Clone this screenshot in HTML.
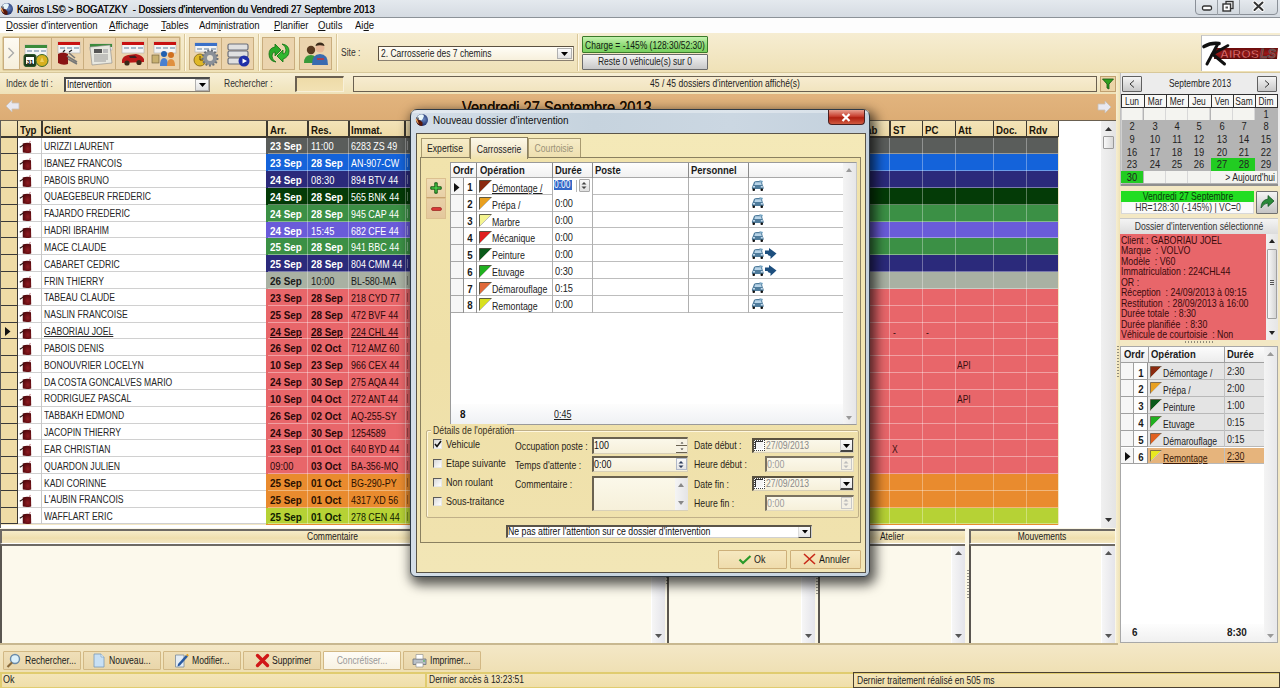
<!DOCTYPE html><html><head><meta charset="utf-8"><title>Kairos LS</title><style>
*{margin:0;padding:0;box-sizing:border-box}
html,body{width:1280px;height:688px;overflow:hidden;background:#f3e7c3;font-family:"Liberation Sans",sans-serif;color:#000}
.t{position:absolute;white-space:nowrap}
.r{position:absolute}
svg{position:absolute;overflow:visible}
</style></head><body>
<div class="r" style="left:0px;top:0px;width:1280px;height:18px;background:linear-gradient(#e4e9ee,#d5dbe2);border-bottom:1px solid #8c9298"></div>
<svg style="left:-0.5px;top:2px" width="14" height="14" viewBox="0 0 14 14"><defs><radialGradient id="g1b" cx=".65" cy=".45" r=".6"><stop offset="0" stop-color="#6a88c0"/><stop offset="1" stop-color="#0e1e5a"/></radialGradient></defs><circle cx="7" cy="7" r="6" fill="url(#g1b)"/><path d="M1.6 5 Q3 1.2 7 1.2 Q8.5 1.4 9 3 Q8 6 6.5 7.5 Q4 7 1.6 5Z" fill="#e8f6fa"/><path d="M1.2 8 Q1.5 6 3 6.5 Q6 7.5 7.5 9.5 Q8 12 6.5 13 Q2.5 12.5 1.2 8Z" fill="#5a1808"/><path d="M0.6 6.5 Q1 5 2 5.5 Q2.5 8 4 11 Q1.5 10 0.6 6.5Z" fill="#f0a860"/><path d="M1.5 4.8 L4 5.3" stroke="#333" stroke-width=".9"/></svg>
<div class="t" style="left:17px;top:0.5px;height:16px;line-height:16px;font-size:11.5px;color:#141414;transform:scaleX(0.83);transform-origin:0 50%;text-shadow:0 0 .3px #000">Kairos LS© &gt; BOGATZKY &nbsp;- Dossiers d'intervention du Vendredi 27 Septembre 2013</div>
<div class="r" style="left:1195px;top:-2px;width:83px;height:17px;border:1px solid #8a9098;border-radius:0 0 4px 4px;background:linear-gradient(#e6eaef,#d2d8de)"></div>
<div class="r" style="left:1217px;top:0px;width:1px;height:15px;background:#9aa0a6"></div>
<div class="r" style="left:1239px;top:0px;width:1px;height:15px;background:#9aa0a6"></div>
<svg style="left:1200px;top:0px" width="70" height="14" viewBox="0 0 70 14"><rect x="2.5" y="6" width="9" height="4" rx="1.5" fill="#fff" stroke="#333" stroke-width="1.3"/><rect x="26" y="1.5" width="7" height="7" fill="#eee" stroke="#333" stroke-width="1.3"/><rect x="23" y="4" width="7.5" height="7" fill="#fff" stroke="#333" stroke-width="1.4"/><rect x="25.5" y="6.5" width="2.5" height="2" fill="#555"/><path d="M54.5 2.5 L62.5 10 M62.5 2.5 L54.5 10" stroke="#fff" stroke-width="4" stroke-linecap="round"/><path d="M54.5 2.5 L62.5 10 M62.5 2.5 L54.5 10" stroke="#333" stroke-width="2" stroke-linecap="round"/></svg>
<div class="r" style="left:0px;top:18px;width:1280px;height:15px;background:#fdfdfd"></div>
<div class="t" style="left:6px;top:18px;height:15px;line-height:15px;font-size:10.5px;color:#111;transform:scaleX(0.91);transform-origin:0 50%;"><u>D</u>ossier d'intervention</div>
<div class="t" style="left:109px;top:18px;height:15px;line-height:15px;font-size:10.5px;color:#111;transform:scaleX(0.91);transform-origin:0 50%;"><u>A</u>ffichage</div>
<div class="t" style="left:161px;top:18px;height:15px;line-height:15px;font-size:10.5px;color:#111;transform:scaleX(0.91);transform-origin:0 50%;"><u>T</u>ables</div>
<div class="t" style="left:199px;top:18px;height:15px;line-height:15px;font-size:10.5px;color:#111;transform:scaleX(0.91);transform-origin:0 50%;">Adm<u>i</u>nistration</div>
<div class="t" style="left:274px;top:18px;height:15px;line-height:15px;font-size:10.5px;color:#111;transform:scaleX(0.91);transform-origin:0 50%;"><u>P</u>lanifier</div>
<div class="t" style="left:318px;top:18px;height:15px;line-height:15px;font-size:10.5px;color:#111;transform:scaleX(0.91);transform-origin:0 50%;"><u>O</u>utils</div>
<div class="t" style="left:355px;top:18px;height:15px;line-height:15px;font-size:10.5px;color:#111;transform:scaleX(0.91);transform-origin:0 50%;">Ai<u>d</u>e</div>
<div class="r" style="left:0px;top:33px;width:1280px;height:40px;background:linear-gradient(#f6edd2,#efe1b6)"></div>
<div class="r" style="left:0px;top:72px;width:1280px;height:1px;background:#d8c89a"></div>
<div class="r" style="left:2px;top:36px;width:179px;height:35px;border:1px solid #e0cfa0;border-radius:2px"></div>
<div class="r" style="left:3px;top:37px;width:17px;height:33px;background:linear-gradient(#fdfaf2,#f6efdc);border:1px solid #c9ad7e"></div>
<svg style="left:7px;top:47px" width="8" height="12" viewBox="0 0 8 12"><path d="M1.5 1 L6.5 6 L1.5 11" fill="none" stroke="#a8a8a8" stroke-width="1.3"/></svg>
<div class="r" style="left:19px;top:37px;width:33px;height:33px;background:#ebd4ae;border:1px solid #c9ad7e"></div>
<div class="r" style="left:51px;top:37px;width:33px;height:33px;background:#ebd4ae;border:1px solid #c9ad7e"></div>
<div class="r" style="left:83px;top:37px;width:33px;height:33px;background:#ebd4ae;border:1px solid #c9ad7e"></div>
<div class="r" style="left:115px;top:37px;width:33px;height:33px;background:#ebd4ae;border:1px solid #c9ad7e"></div>
<div class="r" style="left:147px;top:37px;width:33px;height:33px;background:#ebd4ae;border:1px solid #c9ad7e"></div>
<div class="r" style="left:184px;top:34px;width:1px;height:37px;background:#d9c79a"></div>
<div class="r" style="left:185px;top:34px;width:1px;height:37px;background:#fff8e4"></div>
<div class="r" style="left:189px;top:37px;width:33px;height:33px;background:#ebd4ae;border:1px solid #c9ad7e"></div>
<div class="r" style="left:221px;top:37px;width:33px;height:33px;background:#ebd4ae;border:1px solid #c9ad7e"></div>
<div class="r" style="left:258px;top:34px;width:1px;height:37px;background:#d9c79a"></div>
<div class="r" style="left:259px;top:34px;width:1px;height:37px;background:#fff8e4"></div>
<div class="r" style="left:262px;top:37px;width:33px;height:33px;background:#ebd4ae;border:1px solid #c9ad7e"></div>
<div class="r" style="left:299px;top:37px;width:33px;height:33px;background:#ebd4ae;border:1px solid #c9ad7e"></div>
<div class="r" style="left:336px;top:34px;width:1px;height:37px;background:#d9c79a"></div>
<div class="r" style="left:337px;top:34px;width:1px;height:37px;background:#fff8e4"></div>
<svg style="left:25px;top:45px" width="22" height="11" viewBox="0 0 22 11"><rect x="0" y="0" width="22" height="11" fill="#f4f4f4" stroke="#b0b0b0" stroke-width=".6"/><rect x="0" y="0" width="22" height="3" fill="#3b8b3b"/><rect x="2" y="5" width="5" height="2" fill="#a8b8c8"/><rect x="9" y="5" width="5" height="2" fill="#a8b8c8"/><rect x="16" y="5" width="5" height="2" fill="#a8b8c8"/></svg>
<svg style="left:23px;top:54px" width="26" height="13" viewBox="0 0 26 13"><rect x="1" y="0.5" width="12" height="12" rx="2" fill="#1e3a1e" stroke="#2a5a2a"/><rect x="3" y="3" width="8" height="7" fill="#fff"/><text x="7" y="9.5" font-size="6" font-weight="bold" text-anchor="middle" font-family="Liberation Sans" fill="#000">31</text><circle cx="19" cy="6.5" r="6" fill="#d8b020" stroke="#3a6a2a" stroke-width="1"/><path d="M19 3 L21 8 L17 8Z" fill="#f0d060"/></svg>
<svg style="left:58px;top:42px" width="22" height="11" viewBox="0 0 22 11"><rect x="0" y="0" width="22" height="11" fill="#f4f4f4" stroke="#b0b0b0" stroke-width=".6"/><rect x="0" y="0" width="22" height="3" fill="#c81010"/><rect x="2" y="5" width="5" height="2" fill="#a8b8c8"/><rect x="9" y="5" width="5" height="2" fill="#a8b8c8"/><rect x="16" y="5" width="5" height="2" fill="#a8b8c8"/></svg>
<svg style="left:55px;top:50px" width="26" height="16" viewBox="0 0 26 16"><path d="M3 4 Q8 1 13 4 L13 14 Q8 16 3 13Z" fill="#8a1414"/><path d="M12 6 L22 12 M13 9 L22 14 M14 3 L20 8" stroke="#777" stroke-width="1.6"/><path d="M14 2 L17 0 M8 2 L10 0" stroke="#222" stroke-width="1.2"/></svg>
<svg style="left:90px;top:44px" width="22" height="6" viewBox="0 0 22 6"><rect x="0" y="0" width="22" height="6" fill="#f4f4f4" stroke="#b0b0b0" stroke-width=".6"/><rect x="0" y="0" width="22" height="3" fill="#3b8b3b"/><rect x="2" y="5" width="5" height="2" fill="#a8b8c8"/><rect x="9" y="5" width="5" height="2" fill="#a8b8c8"/><rect x="16" y="5" width="5" height="2" fill="#a8b8c8"/></svg>
<svg style="left:89px;top:44px" width="24" height="22" viewBox="0 0 24 22"><path d="M1 3 L21 1 L23 19 L3 21Z" fill="#e8e8e0" stroke="#888" stroke-width=".6"/><rect x="5" y="5" width="8" height="4" fill="#555"/><path d="M5 11 H19 M5 13 H19 M5 15 H19 M5 17 H17" stroke="#999" stroke-width="1"/><rect x="14" y="5" width="5" height="4" fill="#bbb"/></svg>
<svg style="left:122px;top:42px" width="22" height="11" viewBox="0 0 22 11"><rect x="0" y="0" width="22" height="11" fill="#f4f4f4" stroke="#b0b0b0" stroke-width=".6"/><rect x="0" y="0" width="22" height="3" fill="#c81010"/><rect x="2" y="5" width="5" height="2" fill="#a8b8c8"/><rect x="9" y="5" width="5" height="2" fill="#a8b8c8"/><rect x="16" y="5" width="5" height="2" fill="#a8b8c8"/></svg>
<svg style="left:120px;top:52px" width="26" height="14" viewBox="0 0 26 14"><path d="M2 8 Q3 4 8 3 L16 2 Q22 3 24 7 L24 10 L2 11Z" fill="#b81818"/><path d="M9 4 L15 3.5 L17 6 L10 6Z" fill="#402020"/><circle cx="7" cy="11" r="2.6" fill="#3a2a1a"/><circle cx="19" cy="10.5" r="2.6" fill="#3a2a1a"/></svg>
<svg style="left:154px;top:42px" width="22" height="11" viewBox="0 0 22 11"><rect x="0" y="0" width="22" height="11" fill="#f4f4f4" stroke="#b0b0b0" stroke-width=".6"/><rect x="0" y="0" width="22" height="3" fill="#c81010"/><rect x="2" y="5" width="5" height="2" fill="#a8b8c8"/><rect x="9" y="5" width="5" height="2" fill="#a8b8c8"/><rect x="16" y="5" width="5" height="2" fill="#a8b8c8"/></svg>
<svg style="left:151px;top:48px" width="26" height="19" viewBox="0 0 26 19"><rect x="1" y="7" width="7" height="8" fill="#c8b070" stroke="#6a5a3a" stroke-width=".6"/><circle cx="13" cy="6" r="3" fill="#2060b0"/><path d="M9 18 Q9 10 13 10 Q17 10 17 18Z" fill="#4a80d0"/><circle cx="20" cy="7" r="3" fill="#d07020"/><path d="M16 18 Q16 11 20 11 Q24 11 24 18Z" fill="#e09040"/></svg>
<svg style="left:195px;top:43px" width="22" height="9" viewBox="0 0 22 9"><rect x="0" y="0" width="22" height="9" fill="#f4f4f4" stroke="#b0b0b0" stroke-width=".6"/><rect x="0" y="0" width="22" height="3" fill="#3a70c8"/><rect x="2" y="5" width="5" height="2" fill="#a8b8c8"/><rect x="9" y="5" width="5" height="2" fill="#a8b8c8"/><rect x="16" y="5" width="5" height="2" fill="#a8b8c8"/></svg>
<svg style="left:193px;top:49px" width="26" height="18" viewBox="0 0 26 18"><circle cx="7" cy="11" r="6" fill="#e0b828" stroke="#7a6010" stroke-width=".8"/><path d="M7 7 V11 H10" stroke="#5a4000" stroke-width="1" fill="none"/><circle cx="17" cy="9" r="7" fill="#8a9098"/><circle cx="17" cy="9" r="3" fill="#e8e0d0"/><circle cx="17" cy="9" r="7.5" fill="none" stroke="#6a7078" stroke-width="2" stroke-dasharray="2 1.6"/></svg>
<svg style="left:226px;top:43px" width="24" height="24" viewBox="0 0 24 24"><rect x="2" y="1" width="20" height="6" rx="1.5" fill="#e0e0e0" stroke="#6a6e7a" stroke-width="1.2"/><rect x="2" y="8" width="20" height="6" rx="1.5" fill="#e0e0e0" stroke="#6a6e7a" stroke-width="1.2"/><rect x="2" y="15" width="14" height="6" rx="1.5" fill="#e0e0e0" stroke="#6a6e7a" stroke-width="1.2"/><circle cx="18" cy="18" r="5.5" fill="#2030a8"/><path d="M16.5 15.5 L21 18 L16.5 20.5Z" fill="#fff"/></svg>
<svg style="left:266px;top:40px" width="26" height="26" viewBox="0 0 26 26"><path d="M3 14 Q3 8 9 7 L9 4 L15 10 L9 16 L9 12 Q6 12 6 16 Q6 20 10 22 Q3 21 3 14Z" fill="#28a828" stroke="#107010" stroke-width=".8"/><path d="M23 11 Q23 17 17 19 L17 22 L11 16 L17 10 L17 14 Q20 14 20 10 Q20 6 16 4 Q23 5 23 11Z" fill="#30b830" stroke="#107010" stroke-width=".8"/></svg>
<svg style="left:302px;top:41px" width="28" height="26" viewBox="0 0 28 26"><circle cx="9" cy="9" r="4.2" fill="#5a3a20"/><path d="M2 22 Q2 14 9 14 Q15 14 15 22Z" fill="#3a9a3a"/><circle cx="18" cy="7" r="4.5" fill="#e8b898"/><path d="M13.5 5 Q14 1.5 18 1.5 Q22 1.5 22.5 5 Q18 3.5 13.5 5Z" fill="#3a2a1a"/><path d="M10 24 Q10 13 18 13 Q26 13 26 24Z" fill="#3a6ab0"/><path d="M15 18 H22" stroke="#d03030" stroke-width="1.5"/></svg>
<div class="t" style="left:341px;top:45px;height:16px;line-height:16px;font-size:10px;color:#333;transform:scaleX(0.85);transform-origin:0 50%;">Site :</div>
<div class="r" style="left:378px;top:46px;width:196px;height:15px;background:linear-gradient(#fffdf6,#f7f0dc);border:1px solid #8a8070;border-top-color:#5a5040;border-left-color:#5a5040"></div>
<div class="t" style="left:381px;top:46px;height:15px;line-height:15px;font-size:10px;color:#222;transform:scaleX(0.85);transform-origin:0 50%;">2. Carrosserie des 7 chemins</div>
<div class="r" style="left:557px;top:48px;width:15px;height:11px;background:linear-gradient(#fbfbfb,#e0e0e0);border:1px solid #b0b0b0"></div>
<svg style="left:561px;top:52px" width="7" height="4" viewBox="0 0 7 4"><path d="M0 0 H7 L3.5 4Z" fill="#000"/></svg>
<div class="r" style="left:577px;top:34px;width:1px;height:37px;background:#d9c79a"></div>
<div class="r" style="left:578px;top:34px;width:1px;height:37px;background:#fff8e4"></div>
<div class="r" style="left:582px;top:36px;width:126px;height:17px;background:linear-gradient(#c4f2ae,#8ad872 60%,#7ad060);border:1px solid #3a7a2a;border-radius:1px"></div>
<div class="t" style="left:345.0px;top:36.5px;height:17px;line-height:17px;font-size:10px;color:#102010;width:600px;text-align:center;transform:scaleX(0.85);transform-origin:50% 50%;">Charge = -145% (128:30/52:30)</div>
<div class="r" style="left:582px;top:54px;width:126px;height:16px;background:linear-gradient(#f4f4f4,#c8c8c8);border:1px solid #6a6a6a;border-radius:1px"></div>
<div class="t" style="left:345.0px;top:54px;height:16px;line-height:16px;font-size:10px;color:#222;width:600px;text-align:center;transform:scaleX(0.85);transform-origin:50% 50%;">Reste 0 véhicule(s) sur 0</div>
<div class="r" style="left:1201px;top:35px;width:79px;height:36px;background:#fff;border-left:1px solid #bbb;border-top:1px solid #ccc"></div>
<svg style="left:1201px;top:35px" width="79" height="36" viewBox="0 0 79 36"><defs><linearGradient id="lg" x1="0" y1="0" x2="0" y2="1"><stop offset="0" stop-color="#6a0c0c"/><stop offset=".5" stop-color="#9a1818"/><stop offset="1" stop-color="#5a0808"/></linearGradient></defs><path d="M14 13 H77 L76 24 H13Z" fill="url(#lg)"/><text x="19" y="22.5" font-family="Liberation Sans" font-size="10.5" font-weight="bold" fill="#e86a6a" stroke="#4a0606" stroke-width=".4" textLength="39" lengthAdjust="spacingAndGlyphs">AIROS</text><text x="59" y="23" font-family="Liberation Sans" font-size="12" font-style="italic" font-weight="bold" fill="#c83030" stroke="#555" stroke-width=".8" textLength="16" lengthAdjust="spacingAndGlyphs">LS</text><path d="M3 11.5 Q10 7.5 18 8.5" stroke="#111" stroke-width="3.6" fill="none" stroke-linecap="round"/><path d="M16.5 9.5 L6 29" stroke="#111" stroke-width="3" fill="none" stroke-linecap="round"/><path d="M11 19.5 L27 10.5" stroke="#111" stroke-width="2.6" fill="none" stroke-linecap="round"/><path d="M11.5 19 L23.5 29" stroke="#111" stroke-width="3" fill="none" stroke-linecap="round"/></svg>
<div class="r" style="left:0px;top:73px;width:1118px;height:21px;background:linear-gradient(#f7efd6,#efe2b8)"></div>
<div class="t" style="left:6px;top:75px;height:17px;line-height:17px;font-size:10px;color:#333;transform:scaleX(0.85);transform-origin:0 50%;">Index de tri :</div>
<div class="r" style="left:64px;top:77px;width:146px;height:15px;background:linear-gradient(#fffdf8,#faf4e4);border:1px solid #8a8070;border-top:2px solid #4a4a4a;border-left:2px solid #4a4a4a"></div>
<div class="t" style="left:67px;top:77px;height:15px;line-height:15px;font-size:10px;color:#111;transform:scaleX(0.85);transform-origin:0 50%;">Intervention</div>
<div class="r" style="left:195px;top:79px;width:14px;height:12px;background:linear-gradient(#fbfbfb,#e0e0e0);border:1px solid #b0b0b0"></div>
<svg style="left:198.5px;top:83px" width="7" height="4" viewBox="0 0 7 4"><path d="M0 0 H7 L3.5 4Z" fill="#000"/></svg>
<div class="t" style="left:224px;top:75px;height:17px;line-height:17px;font-size:10px;color:#333;transform:scaleX(0.85);transform-origin:0 50%;">Rechercher :</div>
<div class="r" style="left:295px;top:76px;width:49px;height:16px;background:linear-gradient(#eedba8,#f2e2b4);border:1px solid #f8f0d8;border-top:2px solid #6a6050;border-left:2px solid #6a6050"></div>
<div class="r" style="left:353px;top:76px;width:744px;height:16px;background:linear-gradient(#f7ecd0,#f1e4bf);border:1px solid #6a6050"></div>
<div class="t" style="left:353px;top:76px;height:16px;line-height:16px;font-size:10px;color:#222;width:744px;text-align:center;transform:scaleX(0.85);transform-origin:50% 50%;">45 / 45 dossiers d'intervention affiché(s)</div>
<div class="r" style="left:1100px;top:76px;width:16px;height:16px;background:#ecd5a8;border:1px solid #c0a070"></div>
<svg style="left:1102px;top:78px" width="12" height="12" viewBox="0 0 12 12"><path d="M0.5 1 H11.5 L7 6 V11 L5 10 V6Z" fill="#30a020" stroke="#105010" stroke-width=".8"/></svg>
<div class="r" style="left:0px;top:94px;width:1116px;height:27px;background:linear-gradient(#e2b47e,#dcac74)"></div>
<div class="t" style="left:462px;top:97px;height:22px;line-height:22px;font-size:18px;color:#201000;transform:scaleX(0.81);transform-origin:0 50%;text-shadow:0 0 .6px #201000">Vendredi 27 Septembre 2013</div>
<svg style="left:6px;top:100px" width="14" height="12" viewBox="0 0 14 12"><path d="M0 6 L6 0 V3 H13 V9 H6 V12Z" fill="#e8e8f0" stroke="#c8c0b8" stroke-width=".8"/></svg>
<svg style="left:1097px;top:101px" width="14" height="12" viewBox="0 0 14 12"><path d="M14 6 L8 0 V3 H1 V9 H8 V12Z" fill="#e8e8f0" stroke="#c8c0b8" stroke-width=".8"/></svg>
<div class="r" style="left:0px;top:120px;width:1116px;height:1px;background:#6a6050"></div>
<div class="r" style="left:0px;top:120px;width:1px;height:408px;background:#5a5a5a"></div>
<div class="r" style="left:1px;top:121px;width:1057px;height:16px;background:linear-gradient(#f3e3b8,#eedaa6)"></div>
<div class="r" style="left:1px;top:136.5px;width:1057px;height:1.5px;background:#3c3830"></div>
<div class="r" style="left:16.5px;top:121px;width:1.5px;height:16px;background:#3c3830"></div>
<div class="r" style="left:41px;top:121px;width:1.5px;height:16px;background:#3c3830"></div>
<div class="r" style="left:266px;top:121px;width:1.5px;height:16px;background:#3c3830"></div>
<div class="r" style="left:307px;top:121px;width:1.5px;height:16px;background:#3c3830"></div>
<div class="r" style="left:348px;top:121px;width:1.5px;height:16px;background:#3c3830"></div>
<div class="r" style="left:404px;top:121px;width:1.5px;height:16px;background:#3c3830"></div>
<div class="r" style="left:889px;top:121px;width:1.5px;height:16px;background:#3c3830"></div>
<div class="r" style="left:921.5px;top:121px;width:1.5px;height:16px;background:#3c3830"></div>
<div class="r" style="left:954.5px;top:121px;width:1.5px;height:16px;background:#3c3830"></div>
<div class="r" style="left:992.5px;top:121px;width:1.5px;height:16px;background:#3c3830"></div>
<div class="r" style="left:1025.5px;top:121px;width:1.5px;height:16px;background:#3c3830"></div>
<div class="r" style="left:1058px;top:121px;width:1.5px;height:16px;background:#3c3830"></div>
<div class="t" style="left:20px;top:121.5px;height:16px;line-height:16px;font-size:11px;font-weight:bold;color:#1a1408;transform:scaleX(0.88);transform-origin:0 50%;">Typ</div>
<div class="t" style="left:44px;top:121.5px;height:16px;line-height:16px;font-size:11px;font-weight:bold;color:#1a1408;transform:scaleX(0.88);transform-origin:0 50%;">Client</div>
<div class="t" style="left:270px;top:121.5px;height:16px;line-height:16px;font-size:11px;font-weight:bold;color:#1a1408;transform:scaleX(0.88);transform-origin:0 50%;">Arr.</div>
<div class="t" style="left:311px;top:121.5px;height:16px;line-height:16px;font-size:11px;font-weight:bold;color:#1a1408;transform:scaleX(0.88);transform-origin:0 50%;">Res.</div>
<div class="t" style="left:351px;top:121.5px;height:16px;line-height:16px;font-size:11px;font-weight:bold;color:#1a1408;transform:scaleX(0.88);transform-origin:0 50%;">Immat.</div>
<div class="t" style="left:893px;top:121.5px;height:16px;line-height:16px;font-size:11px;font-weight:bold;color:#1a1408;transform:scaleX(0.88);transform-origin:0 50%;">ST</div>
<div class="t" style="left:925px;top:121.5px;height:16px;line-height:16px;font-size:11px;font-weight:bold;color:#1a1408;transform:scaleX(0.88);transform-origin:0 50%;">PC</div>
<div class="t" style="left:958px;top:121.5px;height:16px;line-height:16px;font-size:11px;font-weight:bold;color:#1a1408;transform:scaleX(0.88);transform-origin:0 50%;">Att</div>
<div class="t" style="left:996px;top:121.5px;height:16px;line-height:16px;font-size:11px;font-weight:bold;color:#1a1408;transform:scaleX(0.88);transform-origin:0 50%;">Doc.</div>
<div class="t" style="left:1029px;top:121.5px;height:16px;line-height:16px;font-size:11px;font-weight:bold;color:#1a1408;transform:scaleX(0.88);transform-origin:0 50%;">Rdv</div>
<div class="t" style="left:866px;top:121.5px;height:16px;line-height:16px;font-size:11px;font-weight:bold;color:#1a1408;transform:scaleX(0.88);transform-origin:0 50%;">ab</div>
<div class="r" style="left:1059px;top:121px;width:43px;height:407px;background:#fff"></div>
<svg style="left:0;top:0" width="0" height="0"><defs><radialGradient id="ig" cx=".6" cy=".6" r=".7"><stop offset="0" stop-color="#8e1c22"/><stop offset="1" stop-color="#4a060a"/></radialGradient></defs></svg>
<div class="r" style="left:1px;top:137.4px;width:15.5px;height:16.83px;background:#efdca6;border-bottom:1.3px solid #3a3a3a"></div>
<div class="r" style="left:16.5px;top:137.4px;width:1.5px;height:16.83px;background:#3c3830"></div>
<div class="r" style="left:18px;top:137.4px;width:248px;height:16.83px;background:#fff;border-bottom:1px solid #d0d0d0"></div>
<div class="r" style="left:41px;top:137.4px;width:1px;height:16.83px;background:#c8c8c8"></div>
<svg style="left:19px;top:141.4px" width="13" height="13" viewBox="0 0 13 13"><path d="M3.7 2.5 Q8 1.2 12 2.3 L12.2 11.5 Q8 12.6 3.8 11.6Z" fill="url(#ig)"/><path d="M0.8 6.3 L4 4.3" stroke="#2a1a1a" stroke-width="1.1"/><path d="M10 1.8 L11.6 0.3" stroke="#c89098" stroke-width="1.2"/></svg>
<div class="t" style="left:44px;top:138.9px;height:16.83px;line-height:16.83px;font-size:10px;color:#262626;transform:scaleX(0.86);transform-origin:0 50%;">URIZZI LAURENT</div>
<div class="r" style="left:266px;top:137.4px;width:792px;height:16.83px;background:#5a5d5b;border-bottom:1px solid rgba(255,255,255,.38)"></div>
<div class="r" style="left:266px;top:137.4px;width:1.5px;height:16.83px;background:#5a5d5b"></div>
<div class="r" style="left:307px;top:137.4px;width:1px;height:16.83px;background:rgba(255,255,255,.33)"></div>
<div class="r" style="left:348px;top:137.4px;width:1px;height:16.83px;background:rgba(255,255,255,.33)"></div>
<div class="r" style="left:404.5px;top:137.4px;width:1px;height:16.83px;background:rgba(255,255,255,.33)"></div>
<div class="r" style="left:889px;top:137.4px;width:1px;height:16.83px;background:rgba(255,255,255,.33)"></div>
<div class="r" style="left:921.5px;top:137.4px;width:1px;height:16.83px;background:rgba(255,255,255,.33)"></div>
<div class="r" style="left:954.5px;top:137.4px;width:1px;height:16.83px;background:rgba(255,255,255,.33)"></div>
<div class="r" style="left:992.5px;top:137.4px;width:1px;height:16.83px;background:rgba(255,255,255,.33)"></div>
<div class="r" style="left:1025.5px;top:137.4px;width:1px;height:16.83px;background:rgba(255,255,255,.33)"></div>
<div class="t" style="left:270px;top:138.4px;height:16.83px;line-height:16.83px;font-size:11px;font-weight:bold;color:#fff;transform:scaleX(0.9);transform-origin:0 50%;">23 Sep</div>
<div class="t" style="left:311px;top:138.4px;height:16.83px;line-height:16.83px;font-size:11px;color:#fff;transform:scaleX(0.85);transform-origin:0 50%;">11:00</div>
<div class="t" style="left:351px;top:138.4px;height:16.83px;line-height:16.83px;font-size:10.5px;color:#fff;transform:scaleX(0.85);transform-origin:0 50%;">6283 ZS 49</div>
<div class="r" style="left:406.5px;top:141.4px;width:1.2px;height:9px;background:#fff;opacity:.35"></div>
<div class="r" style="left:1px;top:154.23px;width:15.5px;height:16.83px;background:#efdca6;border-bottom:1.3px solid #3a3a3a"></div>
<div class="r" style="left:16.5px;top:154.23px;width:1.5px;height:16.83px;background:#3c3830"></div>
<div class="r" style="left:18px;top:154.23px;width:248px;height:16.83px;background:#fff;border-bottom:1px solid #d0d0d0"></div>
<div class="r" style="left:41px;top:154.23px;width:1px;height:16.83px;background:#c8c8c8"></div>
<svg style="left:19px;top:158.23px" width="13" height="13" viewBox="0 0 13 13"><path d="M3.7 2.5 Q8 1.2 12 2.3 L12.2 11.5 Q8 12.6 3.8 11.6Z" fill="url(#ig)"/><path d="M0.8 6.3 L4 4.3" stroke="#2a1a1a" stroke-width="1.1"/><path d="M10 1.8 L11.6 0.3" stroke="#c89098" stroke-width="1.2"/></svg>
<div class="t" style="left:44px;top:155.73px;height:16.83px;line-height:16.83px;font-size:10px;color:#262626;transform:scaleX(0.86);transform-origin:0 50%;">IBANEZ FRANCOIS</div>
<div class="r" style="left:266px;top:154.23px;width:792px;height:16.83px;background:#1463da;border-bottom:1px solid rgba(255,255,255,.38)"></div>
<div class="r" style="left:266px;top:154.23px;width:1.5px;height:16.83px;background:#1463da"></div>
<div class="r" style="left:307px;top:154.23px;width:1px;height:16.83px;background:rgba(255,255,255,.33)"></div>
<div class="r" style="left:348px;top:154.23px;width:1px;height:16.83px;background:rgba(255,255,255,.33)"></div>
<div class="r" style="left:404.5px;top:154.23px;width:1px;height:16.83px;background:rgba(255,255,255,.33)"></div>
<div class="r" style="left:889px;top:154.23px;width:1px;height:16.83px;background:rgba(255,255,255,.33)"></div>
<div class="r" style="left:921.5px;top:154.23px;width:1px;height:16.83px;background:rgba(255,255,255,.33)"></div>
<div class="r" style="left:954.5px;top:154.23px;width:1px;height:16.83px;background:rgba(255,255,255,.33)"></div>
<div class="r" style="left:992.5px;top:154.23px;width:1px;height:16.83px;background:rgba(255,255,255,.33)"></div>
<div class="r" style="left:1025.5px;top:154.23px;width:1px;height:16.83px;background:rgba(255,255,255,.33)"></div>
<div class="t" style="left:270px;top:155.23px;height:16.83px;line-height:16.83px;font-size:11px;font-weight:bold;color:#fff;transform:scaleX(0.9);transform-origin:0 50%;">23 Sep</div>
<div class="t" style="left:311px;top:155.23px;height:16.83px;line-height:16.83px;font-size:11px;font-weight:bold;color:#fff;transform:scaleX(0.9);transform-origin:0 50%;">28 Sep</div>
<div class="t" style="left:351px;top:155.23px;height:16.83px;line-height:16.83px;font-size:10.5px;color:#fff;transform:scaleX(0.85);transform-origin:0 50%;">AN-907-CW</div>
<div class="r" style="left:406.5px;top:158.23px;width:1.2px;height:9px;background:#fff;opacity:.35"></div>
<div class="r" style="left:1px;top:171.06px;width:15.5px;height:16.83px;background:#efdca6;border-bottom:1.3px solid #3a3a3a"></div>
<div class="r" style="left:16.5px;top:171.06px;width:1.5px;height:16.83px;background:#3c3830"></div>
<div class="r" style="left:18px;top:171.06px;width:248px;height:16.83px;background:#fff;border-bottom:1px solid #d0d0d0"></div>
<div class="r" style="left:41px;top:171.06px;width:1px;height:16.83px;background:#c8c8c8"></div>
<svg style="left:19px;top:175.06px" width="13" height="13" viewBox="0 0 13 13"><path d="M3.7 2.5 Q8 1.2 12 2.3 L12.2 11.5 Q8 12.6 3.8 11.6Z" fill="url(#ig)"/><path d="M0.8 6.3 L4 4.3" stroke="#2a1a1a" stroke-width="1.1"/><path d="M10 1.8 L11.6 0.3" stroke="#c89098" stroke-width="1.2"/></svg>
<div class="t" style="left:44px;top:172.56px;height:16.83px;line-height:16.83px;font-size:10px;color:#262626;transform:scaleX(0.86);transform-origin:0 50%;">PABOIS BRUNO</div>
<div class="r" style="left:266px;top:171.06px;width:792px;height:16.83px;background:#2b2a7b;border-bottom:1px solid rgba(255,255,255,.38)"></div>
<div class="r" style="left:266px;top:171.06px;width:1.5px;height:16.83px;background:#2b2a7b"></div>
<div class="r" style="left:307px;top:171.06px;width:1px;height:16.83px;background:rgba(255,255,255,.33)"></div>
<div class="r" style="left:348px;top:171.06px;width:1px;height:16.83px;background:rgba(255,255,255,.33)"></div>
<div class="r" style="left:404.5px;top:171.06px;width:1px;height:16.83px;background:rgba(255,255,255,.33)"></div>
<div class="r" style="left:889px;top:171.06px;width:1px;height:16.83px;background:rgba(255,255,255,.33)"></div>
<div class="r" style="left:921.5px;top:171.06px;width:1px;height:16.83px;background:rgba(255,255,255,.33)"></div>
<div class="r" style="left:954.5px;top:171.06px;width:1px;height:16.83px;background:rgba(255,255,255,.33)"></div>
<div class="r" style="left:992.5px;top:171.06px;width:1px;height:16.83px;background:rgba(255,255,255,.33)"></div>
<div class="r" style="left:1025.5px;top:171.06px;width:1px;height:16.83px;background:rgba(255,255,255,.33)"></div>
<div class="t" style="left:270px;top:172.06px;height:16.83px;line-height:16.83px;font-size:11px;font-weight:bold;color:#fff;transform:scaleX(0.9);transform-origin:0 50%;">24 Sep</div>
<div class="t" style="left:311px;top:172.06px;height:16.83px;line-height:16.83px;font-size:11px;color:#fff;transform:scaleX(0.85);transform-origin:0 50%;">08:30</div>
<div class="t" style="left:351px;top:172.06px;height:16.83px;line-height:16.83px;font-size:10.5px;color:#fff;transform:scaleX(0.85);transform-origin:0 50%;">894 BTV 44</div>
<div class="r" style="left:406.5px;top:175.06px;width:1.2px;height:9px;background:#fff;opacity:.35"></div>
<div class="r" style="left:1px;top:187.89px;width:15.5px;height:16.83px;background:#efdca6;border-bottom:1.3px solid #3a3a3a"></div>
<div class="r" style="left:16.5px;top:187.89px;width:1.5px;height:16.83px;background:#3c3830"></div>
<div class="r" style="left:18px;top:187.89px;width:248px;height:16.83px;background:#fff;border-bottom:1px solid #d0d0d0"></div>
<div class="r" style="left:41px;top:187.89px;width:1px;height:16.83px;background:#c8c8c8"></div>
<svg style="left:19px;top:191.89px" width="13" height="13" viewBox="0 0 13 13"><path d="M3.7 2.5 Q8 1.2 12 2.3 L12.2 11.5 Q8 12.6 3.8 11.6Z" fill="url(#ig)"/><path d="M0.8 6.3 L4 4.3" stroke="#2a1a1a" stroke-width="1.1"/><path d="M10 1.8 L11.6 0.3" stroke="#c89098" stroke-width="1.2"/></svg>
<div class="t" style="left:44px;top:189.39px;height:16.83px;line-height:16.83px;font-size:10px;color:#262626;transform:scaleX(0.86);transform-origin:0 50%;">QUAEGEBEUR FREDERIC</div>
<div class="r" style="left:266px;top:187.89px;width:792px;height:16.83px;background:#043b07;border-bottom:1px solid rgba(255,255,255,.38)"></div>
<div class="r" style="left:266px;top:187.89px;width:1.5px;height:16.83px;background:#043b07"></div>
<div class="r" style="left:307px;top:187.89px;width:1px;height:16.83px;background:rgba(255,255,255,.33)"></div>
<div class="r" style="left:348px;top:187.89px;width:1px;height:16.83px;background:rgba(255,255,255,.33)"></div>
<div class="r" style="left:404.5px;top:187.89px;width:1px;height:16.83px;background:rgba(255,255,255,.33)"></div>
<div class="r" style="left:889px;top:187.89px;width:1px;height:16.83px;background:rgba(255,255,255,.33)"></div>
<div class="r" style="left:921.5px;top:187.89px;width:1px;height:16.83px;background:rgba(255,255,255,.33)"></div>
<div class="r" style="left:954.5px;top:187.89px;width:1px;height:16.83px;background:rgba(255,255,255,.33)"></div>
<div class="r" style="left:992.5px;top:187.89px;width:1px;height:16.83px;background:rgba(255,255,255,.33)"></div>
<div class="r" style="left:1025.5px;top:187.89px;width:1px;height:16.83px;background:rgba(255,255,255,.33)"></div>
<div class="t" style="left:270px;top:188.89px;height:16.83px;line-height:16.83px;font-size:11px;font-weight:bold;color:#fff;transform:scaleX(0.9);transform-origin:0 50%;">24 Sep</div>
<div class="t" style="left:311px;top:188.89px;height:16.83px;line-height:16.83px;font-size:11px;font-weight:bold;color:#fff;transform:scaleX(0.9);transform-origin:0 50%;">28 Sep</div>
<div class="t" style="left:351px;top:188.89px;height:16.83px;line-height:16.83px;font-size:10.5px;color:#fff;transform:scaleX(0.85);transform-origin:0 50%;">565 BNK 44</div>
<div class="r" style="left:406.5px;top:191.89px;width:1.2px;height:9px;background:#fff;opacity:.35"></div>
<div class="r" style="left:1px;top:204.72px;width:15.5px;height:16.83px;background:#efdca6;border-bottom:1.3px solid #3a3a3a"></div>
<div class="r" style="left:16.5px;top:204.72px;width:1.5px;height:16.83px;background:#3c3830"></div>
<div class="r" style="left:18px;top:204.72px;width:248px;height:16.83px;background:#fff;border-bottom:1px solid #d0d0d0"></div>
<div class="r" style="left:41px;top:204.72px;width:1px;height:16.83px;background:#c8c8c8"></div>
<svg style="left:19px;top:208.72px" width="13" height="13" viewBox="0 0 13 13"><path d="M3.7 2.5 Q8 1.2 12 2.3 L12.2 11.5 Q8 12.6 3.8 11.6Z" fill="url(#ig)"/><path d="M0.8 6.3 L4 4.3" stroke="#2a1a1a" stroke-width="1.1"/><path d="M10 1.8 L11.6 0.3" stroke="#c89098" stroke-width="1.2"/></svg>
<div class="t" style="left:44px;top:206.22px;height:16.83px;line-height:16.83px;font-size:10px;color:#262626;transform:scaleX(0.86);transform-origin:0 50%;">FAJARDO FREDERIC</div>
<div class="r" style="left:266px;top:204.72px;width:792px;height:16.83px;background:#3b9045;border-bottom:1px solid rgba(255,255,255,.38)"></div>
<div class="r" style="left:266px;top:204.72px;width:1.5px;height:16.83px;background:#3b9045"></div>
<div class="r" style="left:307px;top:204.72px;width:1px;height:16.83px;background:rgba(255,255,255,.33)"></div>
<div class="r" style="left:348px;top:204.72px;width:1px;height:16.83px;background:rgba(255,255,255,.33)"></div>
<div class="r" style="left:404.5px;top:204.72px;width:1px;height:16.83px;background:rgba(255,255,255,.33)"></div>
<div class="r" style="left:889px;top:204.72px;width:1px;height:16.83px;background:rgba(255,255,255,.33)"></div>
<div class="r" style="left:921.5px;top:204.72px;width:1px;height:16.83px;background:rgba(255,255,255,.33)"></div>
<div class="r" style="left:954.5px;top:204.72px;width:1px;height:16.83px;background:rgba(255,255,255,.33)"></div>
<div class="r" style="left:992.5px;top:204.72px;width:1px;height:16.83px;background:rgba(255,255,255,.33)"></div>
<div class="r" style="left:1025.5px;top:204.72px;width:1px;height:16.83px;background:rgba(255,255,255,.33)"></div>
<div class="t" style="left:270px;top:205.72px;height:16.83px;line-height:16.83px;font-size:11px;font-weight:bold;color:#fff;transform:scaleX(0.9);transform-origin:0 50%;">24 Sep</div>
<div class="t" style="left:311px;top:205.72px;height:16.83px;line-height:16.83px;font-size:11px;font-weight:bold;color:#fff;transform:scaleX(0.9);transform-origin:0 50%;">28 Sep</div>
<div class="t" style="left:351px;top:205.72px;height:16.83px;line-height:16.83px;font-size:10.5px;color:#fff;transform:scaleX(0.85);transform-origin:0 50%;">945 CAP 44</div>
<div class="r" style="left:406.5px;top:208.72px;width:1.2px;height:9px;background:#fff;opacity:.35"></div>
<div class="r" style="left:1px;top:221.55px;width:15.5px;height:16.83px;background:#efdca6;border-bottom:1.3px solid #3a3a3a"></div>
<div class="r" style="left:16.5px;top:221.55px;width:1.5px;height:16.83px;background:#3c3830"></div>
<div class="r" style="left:18px;top:221.55px;width:248px;height:16.83px;background:#fff;border-bottom:1px solid #d0d0d0"></div>
<div class="r" style="left:41px;top:221.55px;width:1px;height:16.83px;background:#c8c8c8"></div>
<svg style="left:19px;top:225.55px" width="13" height="13" viewBox="0 0 13 13"><path d="M3.7 2.5 Q8 1.2 12 2.3 L12.2 11.5 Q8 12.6 3.8 11.6Z" fill="url(#ig)"/><path d="M0.8 6.3 L4 4.3" stroke="#2a1a1a" stroke-width="1.1"/><path d="M10 1.8 L11.6 0.3" stroke="#c89098" stroke-width="1.2"/></svg>
<div class="t" style="left:44px;top:223.05px;height:16.83px;line-height:16.83px;font-size:10px;color:#262626;transform:scaleX(0.86);transform-origin:0 50%;">HADRI IBRAHIM</div>
<div class="r" style="left:266px;top:221.55px;width:792px;height:16.83px;background:#6a5bd9;border-bottom:1px solid rgba(255,255,255,.38)"></div>
<div class="r" style="left:266px;top:221.55px;width:1.5px;height:16.83px;background:#6a5bd9"></div>
<div class="r" style="left:307px;top:221.55px;width:1px;height:16.83px;background:rgba(255,255,255,.33)"></div>
<div class="r" style="left:348px;top:221.55px;width:1px;height:16.83px;background:rgba(255,255,255,.33)"></div>
<div class="r" style="left:404.5px;top:221.55px;width:1px;height:16.83px;background:rgba(255,255,255,.33)"></div>
<div class="r" style="left:889px;top:221.55px;width:1px;height:16.83px;background:rgba(255,255,255,.33)"></div>
<div class="r" style="left:921.5px;top:221.55px;width:1px;height:16.83px;background:rgba(255,255,255,.33)"></div>
<div class="r" style="left:954.5px;top:221.55px;width:1px;height:16.83px;background:rgba(255,255,255,.33)"></div>
<div class="r" style="left:992.5px;top:221.55px;width:1px;height:16.83px;background:rgba(255,255,255,.33)"></div>
<div class="r" style="left:1025.5px;top:221.55px;width:1px;height:16.83px;background:rgba(255,255,255,.33)"></div>
<div class="t" style="left:270px;top:222.55px;height:16.83px;line-height:16.83px;font-size:11px;font-weight:bold;color:#fff;transform:scaleX(0.9);transform-origin:0 50%;">24 Sep</div>
<div class="t" style="left:311px;top:222.55px;height:16.83px;line-height:16.83px;font-size:11px;color:#fff;transform:scaleX(0.85);transform-origin:0 50%;">15:45</div>
<div class="t" style="left:351px;top:222.55px;height:16.83px;line-height:16.83px;font-size:10.5px;color:#fff;transform:scaleX(0.85);transform-origin:0 50%;">682 CFE 44</div>
<div class="r" style="left:406.5px;top:225.55px;width:1.2px;height:9px;background:#fff;opacity:.35"></div>
<div class="r" style="left:1px;top:238.38px;width:15.5px;height:16.83px;background:#efdca6;border-bottom:1.3px solid #3a3a3a"></div>
<div class="r" style="left:16.5px;top:238.38px;width:1.5px;height:16.83px;background:#3c3830"></div>
<div class="r" style="left:18px;top:238.38px;width:248px;height:16.83px;background:#fff;border-bottom:1px solid #d0d0d0"></div>
<div class="r" style="left:41px;top:238.38px;width:1px;height:16.83px;background:#c8c8c8"></div>
<svg style="left:19px;top:242.38px" width="13" height="13" viewBox="0 0 13 13"><path d="M3.7 2.5 Q8 1.2 12 2.3 L12.2 11.5 Q8 12.6 3.8 11.6Z" fill="url(#ig)"/><path d="M0.8 6.3 L4 4.3" stroke="#2a1a1a" stroke-width="1.1"/><path d="M10 1.8 L11.6 0.3" stroke="#c89098" stroke-width="1.2"/></svg>
<div class="t" style="left:44px;top:239.88px;height:16.83px;line-height:16.83px;font-size:10px;color:#262626;transform:scaleX(0.86);transform-origin:0 50%;">MACE CLAUDE</div>
<div class="r" style="left:266px;top:238.38px;width:792px;height:16.83px;background:#3b9045;border-bottom:1px solid rgba(255,255,255,.38)"></div>
<div class="r" style="left:266px;top:238.38px;width:1.5px;height:16.83px;background:#3b9045"></div>
<div class="r" style="left:307px;top:238.38px;width:1px;height:16.83px;background:rgba(255,255,255,.33)"></div>
<div class="r" style="left:348px;top:238.38px;width:1px;height:16.83px;background:rgba(255,255,255,.33)"></div>
<div class="r" style="left:404.5px;top:238.38px;width:1px;height:16.83px;background:rgba(255,255,255,.33)"></div>
<div class="r" style="left:889px;top:238.38px;width:1px;height:16.83px;background:rgba(255,255,255,.33)"></div>
<div class="r" style="left:921.5px;top:238.38px;width:1px;height:16.83px;background:rgba(255,255,255,.33)"></div>
<div class="r" style="left:954.5px;top:238.38px;width:1px;height:16.83px;background:rgba(255,255,255,.33)"></div>
<div class="r" style="left:992.5px;top:238.38px;width:1px;height:16.83px;background:rgba(255,255,255,.33)"></div>
<div class="r" style="left:1025.5px;top:238.38px;width:1px;height:16.83px;background:rgba(255,255,255,.33)"></div>
<div class="t" style="left:270px;top:239.38px;height:16.83px;line-height:16.83px;font-size:11px;font-weight:bold;color:#fff;transform:scaleX(0.9);transform-origin:0 50%;">25 Sep</div>
<div class="t" style="left:311px;top:239.38px;height:16.83px;line-height:16.83px;font-size:11px;font-weight:bold;color:#fff;transform:scaleX(0.9);transform-origin:0 50%;">28 Sep</div>
<div class="t" style="left:351px;top:239.38px;height:16.83px;line-height:16.83px;font-size:10.5px;color:#fff;transform:scaleX(0.85);transform-origin:0 50%;">941 BBC 44</div>
<div class="r" style="left:406.5px;top:242.38px;width:1.2px;height:9px;background:#fff;opacity:.35"></div>
<div class="r" style="left:1px;top:255.21px;width:15.5px;height:16.83px;background:#efdca6;border-bottom:1.3px solid #3a3a3a"></div>
<div class="r" style="left:16.5px;top:255.21px;width:1.5px;height:16.83px;background:#3c3830"></div>
<div class="r" style="left:18px;top:255.21px;width:248px;height:16.83px;background:#fff;border-bottom:1px solid #d0d0d0"></div>
<div class="r" style="left:41px;top:255.21px;width:1px;height:16.83px;background:#c8c8c8"></div>
<svg style="left:19px;top:259.21000000000004px" width="13" height="13" viewBox="0 0 13 13"><path d="M3.7 2.5 Q8 1.2 12 2.3 L12.2 11.5 Q8 12.6 3.8 11.6Z" fill="url(#ig)"/><path d="M0.8 6.3 L4 4.3" stroke="#2a1a1a" stroke-width="1.1"/><path d="M10 1.8 L11.6 0.3" stroke="#c89098" stroke-width="1.2"/></svg>
<div class="t" style="left:44px;top:256.71000000000004px;height:16.83px;line-height:16.83px;font-size:10px;color:#262626;transform:scaleX(0.86);transform-origin:0 50%;">CABARET CEDRIC</div>
<div class="r" style="left:266px;top:255.21px;width:792px;height:16.83px;background:#2b2a7b;border-bottom:1px solid rgba(255,255,255,.38)"></div>
<div class="r" style="left:266px;top:255.21px;width:1.5px;height:16.83px;background:#2b2a7b"></div>
<div class="r" style="left:307px;top:255.21px;width:1px;height:16.83px;background:rgba(255,255,255,.33)"></div>
<div class="r" style="left:348px;top:255.21px;width:1px;height:16.83px;background:rgba(255,255,255,.33)"></div>
<div class="r" style="left:404.5px;top:255.21px;width:1px;height:16.83px;background:rgba(255,255,255,.33)"></div>
<div class="r" style="left:889px;top:255.21px;width:1px;height:16.83px;background:rgba(255,255,255,.33)"></div>
<div class="r" style="left:921.5px;top:255.21px;width:1px;height:16.83px;background:rgba(255,255,255,.33)"></div>
<div class="r" style="left:954.5px;top:255.21px;width:1px;height:16.83px;background:rgba(255,255,255,.33)"></div>
<div class="r" style="left:992.5px;top:255.21px;width:1px;height:16.83px;background:rgba(255,255,255,.33)"></div>
<div class="r" style="left:1025.5px;top:255.21px;width:1px;height:16.83px;background:rgba(255,255,255,.33)"></div>
<div class="t" style="left:270px;top:256.21000000000004px;height:16.83px;line-height:16.83px;font-size:11px;font-weight:bold;color:#fff;transform:scaleX(0.9);transform-origin:0 50%;">25 Sep</div>
<div class="t" style="left:311px;top:256.21000000000004px;height:16.83px;line-height:16.83px;font-size:11px;font-weight:bold;color:#fff;transform:scaleX(0.9);transform-origin:0 50%;">28 Sep</div>
<div class="t" style="left:351px;top:256.21000000000004px;height:16.83px;line-height:16.83px;font-size:10.5px;color:#fff;transform:scaleX(0.85);transform-origin:0 50%;">804 CMM 44</div>
<div class="r" style="left:406.5px;top:259.21000000000004px;width:1.2px;height:9px;background:#fff;opacity:.35"></div>
<div class="r" style="left:1px;top:272.04px;width:15.5px;height:16.83px;background:#efdca6;border-bottom:1.3px solid #3a3a3a"></div>
<div class="r" style="left:16.5px;top:272.04px;width:1.5px;height:16.83px;background:#3c3830"></div>
<div class="r" style="left:18px;top:272.04px;width:248px;height:16.83px;background:#fff;border-bottom:1px solid #d0d0d0"></div>
<div class="r" style="left:41px;top:272.04px;width:1px;height:16.83px;background:#c8c8c8"></div>
<svg style="left:19px;top:276.04px" width="13" height="13" viewBox="0 0 13 13"><path d="M3.7 2.5 Q8 1.2 12 2.3 L12.2 11.5 Q8 12.6 3.8 11.6Z" fill="url(#ig)"/><path d="M0.8 6.3 L4 4.3" stroke="#2a1a1a" stroke-width="1.1"/><path d="M10 1.8 L11.6 0.3" stroke="#c89098" stroke-width="1.2"/></svg>
<div class="t" style="left:44px;top:273.54px;height:16.83px;line-height:16.83px;font-size:10px;color:#262626;transform:scaleX(0.86);transform-origin:0 50%;">FRIN THIERRY</div>
<div class="r" style="left:266px;top:272.04px;width:792px;height:16.83px;background:#a9b1a3;border-bottom:1px solid rgba(255,255,255,.38)"></div>
<div class="r" style="left:266px;top:272.04px;width:1.5px;height:16.83px;background:#a9b1a3"></div>
<div class="r" style="left:307px;top:272.04px;width:1px;height:16.83px;background:rgba(255,255,255,.33)"></div>
<div class="r" style="left:348px;top:272.04px;width:1px;height:16.83px;background:rgba(255,255,255,.33)"></div>
<div class="r" style="left:404.5px;top:272.04px;width:1px;height:16.83px;background:rgba(255,255,255,.33)"></div>
<div class="r" style="left:889px;top:272.04px;width:1px;height:16.83px;background:rgba(255,255,255,.33)"></div>
<div class="r" style="left:921.5px;top:272.04px;width:1px;height:16.83px;background:rgba(255,255,255,.33)"></div>
<div class="r" style="left:954.5px;top:272.04px;width:1px;height:16.83px;background:rgba(255,255,255,.33)"></div>
<div class="r" style="left:992.5px;top:272.04px;width:1px;height:16.83px;background:rgba(255,255,255,.33)"></div>
<div class="r" style="left:1025.5px;top:272.04px;width:1px;height:16.83px;background:rgba(255,255,255,.33)"></div>
<div class="t" style="left:270px;top:273.04px;height:16.83px;line-height:16.83px;font-size:11px;font-weight:bold;color:#1a1a1a;transform:scaleX(0.9);transform-origin:0 50%;">26 Sep</div>
<div class="t" style="left:311px;top:273.04px;height:16.83px;line-height:16.83px;font-size:11px;color:#1a1a1a;transform:scaleX(0.85);transform-origin:0 50%;">10:00</div>
<div class="t" style="left:351px;top:273.04px;height:16.83px;line-height:16.83px;font-size:10.5px;color:#1a1a1a;transform:scaleX(0.85);transform-origin:0 50%;">BL-580-MA</div>
<div class="r" style="left:406.5px;top:276.04px;width:1.2px;height:9px;background:#1a1a1a;opacity:.35"></div>
<div class="r" style="left:1px;top:288.87px;width:15.5px;height:16.83px;background:#efdca6;border-bottom:1.3px solid #3a3a3a"></div>
<div class="r" style="left:16.5px;top:288.87px;width:1.5px;height:16.83px;background:#3c3830"></div>
<div class="r" style="left:18px;top:288.87px;width:248px;height:16.83px;background:#fff;border-bottom:1px solid #d0d0d0"></div>
<div class="r" style="left:41px;top:288.87px;width:1px;height:16.83px;background:#c8c8c8"></div>
<svg style="left:19px;top:292.87px" width="13" height="13" viewBox="0 0 13 13"><path d="M3.7 2.5 Q8 1.2 12 2.3 L12.2 11.5 Q8 12.6 3.8 11.6Z" fill="url(#ig)"/><path d="M0.8 6.3 L4 4.3" stroke="#2a1a1a" stroke-width="1.1"/><path d="M10 1.8 L11.6 0.3" stroke="#c89098" stroke-width="1.2"/></svg>
<div class="t" style="left:44px;top:290.37px;height:16.83px;line-height:16.83px;font-size:10px;color:#262626;transform:scaleX(0.86);transform-origin:0 50%;">TABEAU CLAUDE</div>
<div class="r" style="left:266px;top:288.87px;width:792px;height:16.83px;background:#e8666a;border-bottom:1px solid rgba(255,255,255,.38)"></div>
<div class="r" style="left:266px;top:288.87px;width:1.5px;height:16.83px;background:#e8666a"></div>
<div class="r" style="left:307px;top:288.87px;width:1px;height:16.83px;background:rgba(255,255,255,.33)"></div>
<div class="r" style="left:348px;top:288.87px;width:1px;height:16.83px;background:rgba(255,255,255,.33)"></div>
<div class="r" style="left:404.5px;top:288.87px;width:1px;height:16.83px;background:rgba(255,255,255,.33)"></div>
<div class="r" style="left:889px;top:288.87px;width:1px;height:16.83px;background:rgba(255,255,255,.33)"></div>
<div class="r" style="left:921.5px;top:288.87px;width:1px;height:16.83px;background:rgba(255,255,255,.33)"></div>
<div class="r" style="left:954.5px;top:288.87px;width:1px;height:16.83px;background:rgba(255,255,255,.33)"></div>
<div class="r" style="left:992.5px;top:288.87px;width:1px;height:16.83px;background:rgba(255,255,255,.33)"></div>
<div class="r" style="left:1025.5px;top:288.87px;width:1px;height:16.83px;background:rgba(255,255,255,.33)"></div>
<div class="t" style="left:270px;top:289.87px;height:16.83px;line-height:16.83px;font-size:11px;font-weight:bold;color:#2a0808;transform:scaleX(0.9);transform-origin:0 50%;">23 Sep</div>
<div class="t" style="left:311px;top:289.87px;height:16.83px;line-height:16.83px;font-size:11px;font-weight:bold;color:#2a0808;transform:scaleX(0.9);transform-origin:0 50%;">28 Sep</div>
<div class="t" style="left:351px;top:289.87px;height:16.83px;line-height:16.83px;font-size:10.5px;color:#2a0808;transform:scaleX(0.85);transform-origin:0 50%;">218 CYD 77</div>
<div class="r" style="left:406.5px;top:292.87px;width:1.2px;height:9px;background:#2a0808;opacity:.35"></div>
<div class="r" style="left:1px;top:305.7px;width:15.5px;height:16.83px;background:#efdca6;border-bottom:1.3px solid #3a3a3a"></div>
<div class="r" style="left:16.5px;top:305.7px;width:1.5px;height:16.83px;background:#3c3830"></div>
<div class="r" style="left:18px;top:305.7px;width:248px;height:16.83px;background:#fff;border-bottom:1px solid #d0d0d0"></div>
<div class="r" style="left:41px;top:305.7px;width:1px;height:16.83px;background:#c8c8c8"></div>
<svg style="left:19px;top:309.7px" width="13" height="13" viewBox="0 0 13 13"><path d="M3.7 2.5 Q8 1.2 12 2.3 L12.2 11.5 Q8 12.6 3.8 11.6Z" fill="url(#ig)"/><path d="M0.8 6.3 L4 4.3" stroke="#2a1a1a" stroke-width="1.1"/><path d="M10 1.8 L11.6 0.3" stroke="#c89098" stroke-width="1.2"/></svg>
<div class="t" style="left:44px;top:307.2px;height:16.83px;line-height:16.83px;font-size:10px;color:#262626;transform:scaleX(0.86);transform-origin:0 50%;">NASLIN FRANCOISE</div>
<div class="r" style="left:266px;top:305.7px;width:792px;height:16.83px;background:#e8666a;border-bottom:1px solid rgba(255,255,255,.38)"></div>
<div class="r" style="left:266px;top:305.7px;width:1.5px;height:16.83px;background:#e8666a"></div>
<div class="r" style="left:307px;top:305.7px;width:1px;height:16.83px;background:rgba(255,255,255,.33)"></div>
<div class="r" style="left:348px;top:305.7px;width:1px;height:16.83px;background:rgba(255,255,255,.33)"></div>
<div class="r" style="left:404.5px;top:305.7px;width:1px;height:16.83px;background:rgba(255,255,255,.33)"></div>
<div class="r" style="left:889px;top:305.7px;width:1px;height:16.83px;background:rgba(255,255,255,.33)"></div>
<div class="r" style="left:921.5px;top:305.7px;width:1px;height:16.83px;background:rgba(255,255,255,.33)"></div>
<div class="r" style="left:954.5px;top:305.7px;width:1px;height:16.83px;background:rgba(255,255,255,.33)"></div>
<div class="r" style="left:992.5px;top:305.7px;width:1px;height:16.83px;background:rgba(255,255,255,.33)"></div>
<div class="r" style="left:1025.5px;top:305.7px;width:1px;height:16.83px;background:rgba(255,255,255,.33)"></div>
<div class="t" style="left:270px;top:306.7px;height:16.83px;line-height:16.83px;font-size:11px;font-weight:bold;color:#2a0808;transform:scaleX(0.9);transform-origin:0 50%;">25 Sep</div>
<div class="t" style="left:311px;top:306.7px;height:16.83px;line-height:16.83px;font-size:11px;font-weight:bold;color:#2a0808;transform:scaleX(0.9);transform-origin:0 50%;">28 Sep</div>
<div class="t" style="left:351px;top:306.7px;height:16.83px;line-height:16.83px;font-size:10.5px;color:#2a0808;transform:scaleX(0.85);transform-origin:0 50%;">472 BVF 44</div>
<div class="r" style="left:406.5px;top:309.7px;width:1.2px;height:9px;background:#2a0808;opacity:.35"></div>
<div class="r" style="left:1px;top:322.53px;width:15.5px;height:16.83px;background:#efdca6;border-bottom:1.3px solid #3a3a3a"></div>
<div class="r" style="left:16.5px;top:322.53px;width:1.5px;height:16.83px;background:#3c3830"></div>
<div class="r" style="left:18px;top:322.53px;width:248px;height:16.83px;background:#fff;border-bottom:1px solid #d0d0d0"></div>
<div class="r" style="left:41px;top:322.53px;width:1px;height:16.83px;background:#c8c8c8"></div>
<svg style="left:19px;top:326.53px" width="13" height="13" viewBox="0 0 13 13"><path d="M3.7 2.5 Q8 1.2 12 2.3 L12.2 11.5 Q8 12.6 3.8 11.6Z" fill="url(#ig)"/><path d="M0.8 6.3 L4 4.3" stroke="#2a1a1a" stroke-width="1.1"/><path d="M10 1.8 L11.6 0.3" stroke="#c89098" stroke-width="1.2"/></svg>
<div class="t" style="left:44px;top:324.03px;height:16.83px;line-height:16.83px;font-size:10px;color:#262626;text-decoration:underline;transform:scaleX(0.86);transform-origin:0 50%;">GABORIAU JOEL</div>
<div class="r" style="left:266px;top:322.53px;width:792px;height:16.83px;background:#e8666a;border-bottom:1px solid rgba(255,255,255,.38)"></div>
<div class="r" style="left:266px;top:322.53px;width:1.5px;height:16.83px;background:#e8666a"></div>
<div class="r" style="left:307px;top:322.53px;width:1px;height:16.83px;background:rgba(255,255,255,.33)"></div>
<div class="r" style="left:348px;top:322.53px;width:1px;height:16.83px;background:rgba(255,255,255,.33)"></div>
<div class="r" style="left:404.5px;top:322.53px;width:1px;height:16.83px;background:rgba(255,255,255,.33)"></div>
<div class="r" style="left:889px;top:322.53px;width:1px;height:16.83px;background:rgba(255,255,255,.33)"></div>
<div class="r" style="left:921.5px;top:322.53px;width:1px;height:16.83px;background:rgba(255,255,255,.33)"></div>
<div class="r" style="left:954.5px;top:322.53px;width:1px;height:16.83px;background:rgba(255,255,255,.33)"></div>
<div class="r" style="left:992.5px;top:322.53px;width:1px;height:16.83px;background:rgba(255,255,255,.33)"></div>
<div class="r" style="left:1025.5px;top:322.53px;width:1px;height:16.83px;background:rgba(255,255,255,.33)"></div>
<div class="t" style="left:270px;top:323.53px;height:16.83px;line-height:16.83px;font-size:11px;font-weight:bold;color:#2a0808;text-decoration:underline;transform:scaleX(0.9);transform-origin:0 50%;">24 Sep</div>
<div class="t" style="left:311px;top:323.53px;height:16.83px;line-height:16.83px;font-size:11px;font-weight:bold;color:#2a0808;text-decoration:underline;transform:scaleX(0.9);transform-origin:0 50%;">28 Sep</div>
<div class="t" style="left:351px;top:323.53px;height:16.83px;line-height:16.83px;font-size:10.5px;color:#2a0808;text-decoration:underline;transform:scaleX(0.85);transform-origin:0 50%;">224 CHL 44</div>
<div class="r" style="left:406.5px;top:326.53px;width:1.2px;height:9px;background:#2a0808;opacity:.35"></div>
<div class="r" style="left:1px;top:339.36px;width:15.5px;height:16.83px;background:#efdca6;border-bottom:1.3px solid #3a3a3a"></div>
<div class="r" style="left:16.5px;top:339.36px;width:1.5px;height:16.83px;background:#3c3830"></div>
<div class="r" style="left:18px;top:339.36px;width:248px;height:16.83px;background:#fff;border-bottom:1px solid #d0d0d0"></div>
<div class="r" style="left:41px;top:339.36px;width:1px;height:16.83px;background:#c8c8c8"></div>
<svg style="left:19px;top:343.36px" width="13" height="13" viewBox="0 0 13 13"><path d="M3.7 2.5 Q8 1.2 12 2.3 L12.2 11.5 Q8 12.6 3.8 11.6Z" fill="url(#ig)"/><path d="M0.8 6.3 L4 4.3" stroke="#2a1a1a" stroke-width="1.1"/><path d="M10 1.8 L11.6 0.3" stroke="#c89098" stroke-width="1.2"/></svg>
<div class="t" style="left:44px;top:340.86px;height:16.83px;line-height:16.83px;font-size:10px;color:#262626;transform:scaleX(0.86);transform-origin:0 50%;">PABOIS DENIS</div>
<div class="r" style="left:266px;top:339.36px;width:792px;height:16.83px;background:#e8666a;border-bottom:1px solid rgba(255,255,255,.38)"></div>
<div class="r" style="left:266px;top:339.36px;width:1.5px;height:16.83px;background:#e8666a"></div>
<div class="r" style="left:307px;top:339.36px;width:1px;height:16.83px;background:rgba(255,255,255,.33)"></div>
<div class="r" style="left:348px;top:339.36px;width:1px;height:16.83px;background:rgba(255,255,255,.33)"></div>
<div class="r" style="left:404.5px;top:339.36px;width:1px;height:16.83px;background:rgba(255,255,255,.33)"></div>
<div class="r" style="left:889px;top:339.36px;width:1px;height:16.83px;background:rgba(255,255,255,.33)"></div>
<div class="r" style="left:921.5px;top:339.36px;width:1px;height:16.83px;background:rgba(255,255,255,.33)"></div>
<div class="r" style="left:954.5px;top:339.36px;width:1px;height:16.83px;background:rgba(255,255,255,.33)"></div>
<div class="r" style="left:992.5px;top:339.36px;width:1px;height:16.83px;background:rgba(255,255,255,.33)"></div>
<div class="r" style="left:1025.5px;top:339.36px;width:1px;height:16.83px;background:rgba(255,255,255,.33)"></div>
<div class="t" style="left:270px;top:340.36px;height:16.83px;line-height:16.83px;font-size:11px;font-weight:bold;color:#2a0808;transform:scaleX(0.9);transform-origin:0 50%;">26 Sep</div>
<div class="t" style="left:311px;top:340.36px;height:16.83px;line-height:16.83px;font-size:11px;font-weight:bold;color:#2a0808;transform:scaleX(0.9);transform-origin:0 50%;">02 Oct</div>
<div class="t" style="left:351px;top:340.36px;height:16.83px;line-height:16.83px;font-size:10.5px;color:#2a0808;transform:scaleX(0.85);transform-origin:0 50%;">712 AMZ 60</div>
<div class="r" style="left:406.5px;top:343.36px;width:1.2px;height:9px;background:#2a0808;opacity:.35"></div>
<div class="r" style="left:1px;top:356.19px;width:15.5px;height:16.83px;background:#efdca6;border-bottom:1.3px solid #3a3a3a"></div>
<div class="r" style="left:16.5px;top:356.19px;width:1.5px;height:16.83px;background:#3c3830"></div>
<div class="r" style="left:18px;top:356.19px;width:248px;height:16.83px;background:#fff;border-bottom:1px solid #d0d0d0"></div>
<div class="r" style="left:41px;top:356.19px;width:1px;height:16.83px;background:#c8c8c8"></div>
<svg style="left:19px;top:360.19px" width="13" height="13" viewBox="0 0 13 13"><path d="M3.7 2.5 Q8 1.2 12 2.3 L12.2 11.5 Q8 12.6 3.8 11.6Z" fill="url(#ig)"/><path d="M0.8 6.3 L4 4.3" stroke="#2a1a1a" stroke-width="1.1"/><path d="M10 1.8 L11.6 0.3" stroke="#c89098" stroke-width="1.2"/></svg>
<div class="t" style="left:44px;top:357.69px;height:16.83px;line-height:16.83px;font-size:10px;color:#262626;transform:scaleX(0.86);transform-origin:0 50%;">BONOUVRIER LOCELYN</div>
<div class="r" style="left:266px;top:356.19px;width:792px;height:16.83px;background:#e8666a;border-bottom:1px solid rgba(255,255,255,.38)"></div>
<div class="r" style="left:266px;top:356.19px;width:1.5px;height:16.83px;background:#e8666a"></div>
<div class="r" style="left:307px;top:356.19px;width:1px;height:16.83px;background:rgba(255,255,255,.33)"></div>
<div class="r" style="left:348px;top:356.19px;width:1px;height:16.83px;background:rgba(255,255,255,.33)"></div>
<div class="r" style="left:404.5px;top:356.19px;width:1px;height:16.83px;background:rgba(255,255,255,.33)"></div>
<div class="r" style="left:889px;top:356.19px;width:1px;height:16.83px;background:rgba(255,255,255,.33)"></div>
<div class="r" style="left:921.5px;top:356.19px;width:1px;height:16.83px;background:rgba(255,255,255,.33)"></div>
<div class="r" style="left:954.5px;top:356.19px;width:1px;height:16.83px;background:rgba(255,255,255,.33)"></div>
<div class="r" style="left:992.5px;top:356.19px;width:1px;height:16.83px;background:rgba(255,255,255,.33)"></div>
<div class="r" style="left:1025.5px;top:356.19px;width:1px;height:16.83px;background:rgba(255,255,255,.33)"></div>
<div class="t" style="left:270px;top:357.19px;height:16.83px;line-height:16.83px;font-size:11px;font-weight:bold;color:#2a0808;transform:scaleX(0.9);transform-origin:0 50%;">10 Sep</div>
<div class="t" style="left:311px;top:357.19px;height:16.83px;line-height:16.83px;font-size:11px;font-weight:bold;color:#2a0808;transform:scaleX(0.9);transform-origin:0 50%;">23 Sep</div>
<div class="t" style="left:351px;top:357.19px;height:16.83px;line-height:16.83px;font-size:10.5px;color:#2a0808;transform:scaleX(0.85);transform-origin:0 50%;">966 CEX 44</div>
<div class="r" style="left:406.5px;top:360.19px;width:1.2px;height:9px;background:#2a0808;opacity:.35"></div>
<div class="r" style="left:1px;top:373.02px;width:15.5px;height:16.83px;background:#efdca6;border-bottom:1.3px solid #3a3a3a"></div>
<div class="r" style="left:16.5px;top:373.02px;width:1.5px;height:16.83px;background:#3c3830"></div>
<div class="r" style="left:18px;top:373.02px;width:248px;height:16.83px;background:#fff;border-bottom:1px solid #d0d0d0"></div>
<div class="r" style="left:41px;top:373.02px;width:1px;height:16.83px;background:#c8c8c8"></div>
<svg style="left:19px;top:377.02px" width="13" height="13" viewBox="0 0 13 13"><path d="M3.7 2.5 Q8 1.2 12 2.3 L12.2 11.5 Q8 12.6 3.8 11.6Z" fill="url(#ig)"/><path d="M0.8 6.3 L4 4.3" stroke="#2a1a1a" stroke-width="1.1"/><path d="M10 1.8 L11.6 0.3" stroke="#c89098" stroke-width="1.2"/></svg>
<div class="t" style="left:44px;top:374.52px;height:16.83px;line-height:16.83px;font-size:10px;color:#262626;transform:scaleX(0.86);transform-origin:0 50%;">DA COSTA GONCALVES MARIO</div>
<div class="r" style="left:266px;top:373.02px;width:792px;height:16.83px;background:#e8666a;border-bottom:1px solid rgba(255,255,255,.38)"></div>
<div class="r" style="left:266px;top:373.02px;width:1.5px;height:16.83px;background:#e8666a"></div>
<div class="r" style="left:307px;top:373.02px;width:1px;height:16.83px;background:rgba(255,255,255,.33)"></div>
<div class="r" style="left:348px;top:373.02px;width:1px;height:16.83px;background:rgba(255,255,255,.33)"></div>
<div class="r" style="left:404.5px;top:373.02px;width:1px;height:16.83px;background:rgba(255,255,255,.33)"></div>
<div class="r" style="left:889px;top:373.02px;width:1px;height:16.83px;background:rgba(255,255,255,.33)"></div>
<div class="r" style="left:921.5px;top:373.02px;width:1px;height:16.83px;background:rgba(255,255,255,.33)"></div>
<div class="r" style="left:954.5px;top:373.02px;width:1px;height:16.83px;background:rgba(255,255,255,.33)"></div>
<div class="r" style="left:992.5px;top:373.02px;width:1px;height:16.83px;background:rgba(255,255,255,.33)"></div>
<div class="r" style="left:1025.5px;top:373.02px;width:1px;height:16.83px;background:rgba(255,255,255,.33)"></div>
<div class="t" style="left:270px;top:374.02px;height:16.83px;line-height:16.83px;font-size:11px;font-weight:bold;color:#2a0808;transform:scaleX(0.9);transform-origin:0 50%;">24 Sep</div>
<div class="t" style="left:311px;top:374.02px;height:16.83px;line-height:16.83px;font-size:11px;font-weight:bold;color:#2a0808;transform:scaleX(0.9);transform-origin:0 50%;">30 Sep</div>
<div class="t" style="left:351px;top:374.02px;height:16.83px;line-height:16.83px;font-size:10.5px;color:#2a0808;transform:scaleX(0.85);transform-origin:0 50%;">275 AQA 44</div>
<div class="r" style="left:406.5px;top:377.02px;width:1.2px;height:9px;background:#2a0808;opacity:.35"></div>
<div class="r" style="left:1px;top:389.85px;width:15.5px;height:16.83px;background:#efdca6;border-bottom:1.3px solid #3a3a3a"></div>
<div class="r" style="left:16.5px;top:389.85px;width:1.5px;height:16.83px;background:#3c3830"></div>
<div class="r" style="left:18px;top:389.85px;width:248px;height:16.83px;background:#fff;border-bottom:1px solid #d0d0d0"></div>
<div class="r" style="left:41px;top:389.85px;width:1px;height:16.83px;background:#c8c8c8"></div>
<svg style="left:19px;top:393.85px" width="13" height="13" viewBox="0 0 13 13"><path d="M3.7 2.5 Q8 1.2 12 2.3 L12.2 11.5 Q8 12.6 3.8 11.6Z" fill="url(#ig)"/><path d="M0.8 6.3 L4 4.3" stroke="#2a1a1a" stroke-width="1.1"/><path d="M10 1.8 L11.6 0.3" stroke="#c89098" stroke-width="1.2"/></svg>
<div class="t" style="left:44px;top:391.35px;height:16.83px;line-height:16.83px;font-size:10px;color:#262626;transform:scaleX(0.86);transform-origin:0 50%;">RODRIGUEZ PASCAL</div>
<div class="r" style="left:266px;top:389.85px;width:792px;height:16.83px;background:#e8666a;border-bottom:1px solid rgba(255,255,255,.38)"></div>
<div class="r" style="left:266px;top:389.85px;width:1.5px;height:16.83px;background:#e8666a"></div>
<div class="r" style="left:307px;top:389.85px;width:1px;height:16.83px;background:rgba(255,255,255,.33)"></div>
<div class="r" style="left:348px;top:389.85px;width:1px;height:16.83px;background:rgba(255,255,255,.33)"></div>
<div class="r" style="left:404.5px;top:389.85px;width:1px;height:16.83px;background:rgba(255,255,255,.33)"></div>
<div class="r" style="left:889px;top:389.85px;width:1px;height:16.83px;background:rgba(255,255,255,.33)"></div>
<div class="r" style="left:921.5px;top:389.85px;width:1px;height:16.83px;background:rgba(255,255,255,.33)"></div>
<div class="r" style="left:954.5px;top:389.85px;width:1px;height:16.83px;background:rgba(255,255,255,.33)"></div>
<div class="r" style="left:992.5px;top:389.85px;width:1px;height:16.83px;background:rgba(255,255,255,.33)"></div>
<div class="r" style="left:1025.5px;top:389.85px;width:1px;height:16.83px;background:rgba(255,255,255,.33)"></div>
<div class="t" style="left:270px;top:390.85px;height:16.83px;line-height:16.83px;font-size:11px;font-weight:bold;color:#2a0808;transform:scaleX(0.9);transform-origin:0 50%;">10 Sep</div>
<div class="t" style="left:311px;top:390.85px;height:16.83px;line-height:16.83px;font-size:11px;font-weight:bold;color:#2a0808;transform:scaleX(0.9);transform-origin:0 50%;">04 Oct</div>
<div class="t" style="left:351px;top:390.85px;height:16.83px;line-height:16.83px;font-size:10.5px;color:#2a0808;transform:scaleX(0.85);transform-origin:0 50%;">272 ANT 44</div>
<div class="r" style="left:406.5px;top:393.85px;width:1.2px;height:9px;background:#2a0808;opacity:.35"></div>
<div class="r" style="left:1px;top:406.68px;width:15.5px;height:16.83px;background:#efdca6;border-bottom:1.3px solid #3a3a3a"></div>
<div class="r" style="left:16.5px;top:406.68px;width:1.5px;height:16.83px;background:#3c3830"></div>
<div class="r" style="left:18px;top:406.68px;width:248px;height:16.83px;background:#fff;border-bottom:1px solid #d0d0d0"></div>
<div class="r" style="left:41px;top:406.68px;width:1px;height:16.83px;background:#c8c8c8"></div>
<svg style="left:19px;top:410.68px" width="13" height="13" viewBox="0 0 13 13"><path d="M3.7 2.5 Q8 1.2 12 2.3 L12.2 11.5 Q8 12.6 3.8 11.6Z" fill="url(#ig)"/><path d="M0.8 6.3 L4 4.3" stroke="#2a1a1a" stroke-width="1.1"/><path d="M10 1.8 L11.6 0.3" stroke="#c89098" stroke-width="1.2"/></svg>
<div class="t" style="left:44px;top:408.18px;height:16.83px;line-height:16.83px;font-size:10px;color:#262626;transform:scaleX(0.86);transform-origin:0 50%;">TABBAKH EDMOND</div>
<div class="r" style="left:266px;top:406.68px;width:792px;height:16.83px;background:#e8666a;border-bottom:1px solid rgba(255,255,255,.38)"></div>
<div class="r" style="left:266px;top:406.68px;width:1.5px;height:16.83px;background:#e8666a"></div>
<div class="r" style="left:307px;top:406.68px;width:1px;height:16.83px;background:rgba(255,255,255,.33)"></div>
<div class="r" style="left:348px;top:406.68px;width:1px;height:16.83px;background:rgba(255,255,255,.33)"></div>
<div class="r" style="left:404.5px;top:406.68px;width:1px;height:16.83px;background:rgba(255,255,255,.33)"></div>
<div class="r" style="left:889px;top:406.68px;width:1px;height:16.83px;background:rgba(255,255,255,.33)"></div>
<div class="r" style="left:921.5px;top:406.68px;width:1px;height:16.83px;background:rgba(255,255,255,.33)"></div>
<div class="r" style="left:954.5px;top:406.68px;width:1px;height:16.83px;background:rgba(255,255,255,.33)"></div>
<div class="r" style="left:992.5px;top:406.68px;width:1px;height:16.83px;background:rgba(255,255,255,.33)"></div>
<div class="r" style="left:1025.5px;top:406.68px;width:1px;height:16.83px;background:rgba(255,255,255,.33)"></div>
<div class="t" style="left:270px;top:407.68px;height:16.83px;line-height:16.83px;font-size:11px;font-weight:bold;color:#2a0808;transform:scaleX(0.9);transform-origin:0 50%;">26 Sep</div>
<div class="t" style="left:311px;top:407.68px;height:16.83px;line-height:16.83px;font-size:11px;font-weight:bold;color:#2a0808;transform:scaleX(0.9);transform-origin:0 50%;">02 Oct</div>
<div class="t" style="left:351px;top:407.68px;height:16.83px;line-height:16.83px;font-size:10.5px;color:#2a0808;transform:scaleX(0.85);transform-origin:0 50%;">AQ-255-SY</div>
<div class="r" style="left:406.5px;top:410.68px;width:1.2px;height:9px;background:#2a0808;opacity:.35"></div>
<div class="r" style="left:1px;top:423.51px;width:15.5px;height:16.83px;background:#efdca6;border-bottom:1.3px solid #3a3a3a"></div>
<div class="r" style="left:16.5px;top:423.51px;width:1.5px;height:16.83px;background:#3c3830"></div>
<div class="r" style="left:18px;top:423.51px;width:248px;height:16.83px;background:#fff;border-bottom:1px solid #d0d0d0"></div>
<div class="r" style="left:41px;top:423.51px;width:1px;height:16.83px;background:#c8c8c8"></div>
<svg style="left:19px;top:427.51px" width="13" height="13" viewBox="0 0 13 13"><path d="M3.7 2.5 Q8 1.2 12 2.3 L12.2 11.5 Q8 12.6 3.8 11.6Z" fill="url(#ig)"/><path d="M0.8 6.3 L4 4.3" stroke="#2a1a1a" stroke-width="1.1"/><path d="M10 1.8 L11.6 0.3" stroke="#c89098" stroke-width="1.2"/></svg>
<div class="t" style="left:44px;top:425.01px;height:16.83px;line-height:16.83px;font-size:10px;color:#262626;transform:scaleX(0.86);transform-origin:0 50%;">JACOPIN THIERRY</div>
<div class="r" style="left:266px;top:423.51px;width:792px;height:16.83px;background:#e8666a;border-bottom:1px solid rgba(255,255,255,.38)"></div>
<div class="r" style="left:266px;top:423.51px;width:1.5px;height:16.83px;background:#e8666a"></div>
<div class="r" style="left:307px;top:423.51px;width:1px;height:16.83px;background:rgba(255,255,255,.33)"></div>
<div class="r" style="left:348px;top:423.51px;width:1px;height:16.83px;background:rgba(255,255,255,.33)"></div>
<div class="r" style="left:404.5px;top:423.51px;width:1px;height:16.83px;background:rgba(255,255,255,.33)"></div>
<div class="r" style="left:889px;top:423.51px;width:1px;height:16.83px;background:rgba(255,255,255,.33)"></div>
<div class="r" style="left:921.5px;top:423.51px;width:1px;height:16.83px;background:rgba(255,255,255,.33)"></div>
<div class="r" style="left:954.5px;top:423.51px;width:1px;height:16.83px;background:rgba(255,255,255,.33)"></div>
<div class="r" style="left:992.5px;top:423.51px;width:1px;height:16.83px;background:rgba(255,255,255,.33)"></div>
<div class="r" style="left:1025.5px;top:423.51px;width:1px;height:16.83px;background:rgba(255,255,255,.33)"></div>
<div class="t" style="left:270px;top:424.51px;height:16.83px;line-height:16.83px;font-size:11px;font-weight:bold;color:#2a0808;transform:scaleX(0.9);transform-origin:0 50%;">24 Sep</div>
<div class="t" style="left:311px;top:424.51px;height:16.83px;line-height:16.83px;font-size:11px;font-weight:bold;color:#2a0808;transform:scaleX(0.9);transform-origin:0 50%;">30 Sep</div>
<div class="t" style="left:351px;top:424.51px;height:16.83px;line-height:16.83px;font-size:10.5px;color:#2a0808;transform:scaleX(0.85);transform-origin:0 50%;">1254589</div>
<div class="r" style="left:406.5px;top:427.51px;width:1.2px;height:9px;background:#2a0808;opacity:.35"></div>
<div class="r" style="left:1px;top:440.34px;width:15.5px;height:16.83px;background:#efdca6;border-bottom:1.3px solid #3a3a3a"></div>
<div class="r" style="left:16.5px;top:440.34px;width:1.5px;height:16.83px;background:#3c3830"></div>
<div class="r" style="left:18px;top:440.34px;width:248px;height:16.83px;background:#fff;border-bottom:1px solid #d0d0d0"></div>
<div class="r" style="left:41px;top:440.34px;width:1px;height:16.83px;background:#c8c8c8"></div>
<svg style="left:19px;top:444.34px" width="13" height="13" viewBox="0 0 13 13"><path d="M3.7 2.5 Q8 1.2 12 2.3 L12.2 11.5 Q8 12.6 3.8 11.6Z" fill="url(#ig)"/><path d="M0.8 6.3 L4 4.3" stroke="#2a1a1a" stroke-width="1.1"/><path d="M10 1.8 L11.6 0.3" stroke="#c89098" stroke-width="1.2"/></svg>
<div class="t" style="left:44px;top:441.84px;height:16.83px;line-height:16.83px;font-size:10px;color:#262626;transform:scaleX(0.86);transform-origin:0 50%;">EAR CHRISTIAN</div>
<div class="r" style="left:266px;top:440.34px;width:792px;height:16.83px;background:#e8666a;border-bottom:1px solid rgba(255,255,255,.38)"></div>
<div class="r" style="left:266px;top:440.34px;width:1.5px;height:16.83px;background:#e8666a"></div>
<div class="r" style="left:307px;top:440.34px;width:1px;height:16.83px;background:rgba(255,255,255,.33)"></div>
<div class="r" style="left:348px;top:440.34px;width:1px;height:16.83px;background:rgba(255,255,255,.33)"></div>
<div class="r" style="left:404.5px;top:440.34px;width:1px;height:16.83px;background:rgba(255,255,255,.33)"></div>
<div class="r" style="left:889px;top:440.34px;width:1px;height:16.83px;background:rgba(255,255,255,.33)"></div>
<div class="r" style="left:921.5px;top:440.34px;width:1px;height:16.83px;background:rgba(255,255,255,.33)"></div>
<div class="r" style="left:954.5px;top:440.34px;width:1px;height:16.83px;background:rgba(255,255,255,.33)"></div>
<div class="r" style="left:992.5px;top:440.34px;width:1px;height:16.83px;background:rgba(255,255,255,.33)"></div>
<div class="r" style="left:1025.5px;top:440.34px;width:1px;height:16.83px;background:rgba(255,255,255,.33)"></div>
<div class="t" style="left:270px;top:441.34px;height:16.83px;line-height:16.83px;font-size:11px;font-weight:bold;color:#2a0808;transform:scaleX(0.9);transform-origin:0 50%;">23 Sep</div>
<div class="t" style="left:311px;top:441.34px;height:16.83px;line-height:16.83px;font-size:11px;font-weight:bold;color:#2a0808;transform:scaleX(0.9);transform-origin:0 50%;">01 Oct</div>
<div class="t" style="left:351px;top:441.34px;height:16.83px;line-height:16.83px;font-size:10.5px;color:#2a0808;transform:scaleX(0.85);transform-origin:0 50%;">640 BYD 44</div>
<div class="r" style="left:406.5px;top:444.34px;width:1.2px;height:9px;background:#2a0808;opacity:.35"></div>
<div class="r" style="left:1px;top:457.17px;width:15.5px;height:16.83px;background:#efdca6;border-bottom:1.3px solid #3a3a3a"></div>
<div class="r" style="left:16.5px;top:457.17px;width:1.5px;height:16.83px;background:#3c3830"></div>
<div class="r" style="left:18px;top:457.17px;width:248px;height:16.83px;background:#fff;border-bottom:1px solid #d0d0d0"></div>
<div class="r" style="left:41px;top:457.17px;width:1px;height:16.83px;background:#c8c8c8"></div>
<svg style="left:19px;top:461.17px" width="13" height="13" viewBox="0 0 13 13"><path d="M3.7 2.5 Q8 1.2 12 2.3 L12.2 11.5 Q8 12.6 3.8 11.6Z" fill="url(#ig)"/><path d="M0.8 6.3 L4 4.3" stroke="#2a1a1a" stroke-width="1.1"/><path d="M10 1.8 L11.6 0.3" stroke="#c89098" stroke-width="1.2"/></svg>
<div class="t" style="left:44px;top:458.67px;height:16.83px;line-height:16.83px;font-size:10px;color:#262626;transform:scaleX(0.86);transform-origin:0 50%;">QUARDON JULIEN</div>
<div class="r" style="left:266px;top:457.17px;width:792px;height:16.83px;background:#e8666a;border-bottom:1px solid rgba(255,255,255,.38)"></div>
<div class="r" style="left:266px;top:457.17px;width:1.5px;height:16.83px;background:#e8666a"></div>
<div class="r" style="left:307px;top:457.17px;width:1px;height:16.83px;background:rgba(255,255,255,.33)"></div>
<div class="r" style="left:348px;top:457.17px;width:1px;height:16.83px;background:rgba(255,255,255,.33)"></div>
<div class="r" style="left:404.5px;top:457.17px;width:1px;height:16.83px;background:rgba(255,255,255,.33)"></div>
<div class="r" style="left:889px;top:457.17px;width:1px;height:16.83px;background:rgba(255,255,255,.33)"></div>
<div class="r" style="left:921.5px;top:457.17px;width:1px;height:16.83px;background:rgba(255,255,255,.33)"></div>
<div class="r" style="left:954.5px;top:457.17px;width:1px;height:16.83px;background:rgba(255,255,255,.33)"></div>
<div class="r" style="left:992.5px;top:457.17px;width:1px;height:16.83px;background:rgba(255,255,255,.33)"></div>
<div class="r" style="left:1025.5px;top:457.17px;width:1px;height:16.83px;background:rgba(255,255,255,.33)"></div>
<div class="t" style="left:270px;top:458.17px;height:16.83px;line-height:16.83px;font-size:11px;color:#2a0808;transform:scaleX(0.85);transform-origin:0 50%;">09:00</div>
<div class="t" style="left:311px;top:458.17px;height:16.83px;line-height:16.83px;font-size:11px;font-weight:bold;color:#2a0808;transform:scaleX(0.9);transform-origin:0 50%;">03 Oct</div>
<div class="t" style="left:351px;top:458.17px;height:16.83px;line-height:16.83px;font-size:10.5px;color:#2a0808;transform:scaleX(0.85);transform-origin:0 50%;">BA-356-MQ</div>
<div class="r" style="left:406.5px;top:461.17px;width:1.2px;height:9px;background:#2a0808;opacity:.35"></div>
<div class="r" style="left:1px;top:474.0px;width:15.5px;height:16.83px;background:#efdca6;border-bottom:1.3px solid #3a3a3a"></div>
<div class="r" style="left:16.5px;top:474.0px;width:1.5px;height:16.83px;background:#3c3830"></div>
<div class="r" style="left:18px;top:474.0px;width:248px;height:16.83px;background:#fff;border-bottom:1px solid #d0d0d0"></div>
<div class="r" style="left:41px;top:474.0px;width:1px;height:16.83px;background:#c8c8c8"></div>
<svg style="left:19px;top:478.0px" width="13" height="13" viewBox="0 0 13 13"><path d="M3.7 2.5 Q8 1.2 12 2.3 L12.2 11.5 Q8 12.6 3.8 11.6Z" fill="url(#ig)"/><path d="M0.8 6.3 L4 4.3" stroke="#2a1a1a" stroke-width="1.1"/><path d="M10 1.8 L11.6 0.3" stroke="#c89098" stroke-width="1.2"/></svg>
<div class="t" style="left:44px;top:475.5px;height:16.83px;line-height:16.83px;font-size:10px;color:#262626;transform:scaleX(0.86);transform-origin:0 50%;">KADI CORINNE</div>
<div class="r" style="left:266px;top:474.0px;width:792px;height:16.83px;background:#e98b2e;border-bottom:1px solid rgba(255,255,255,.38)"></div>
<div class="r" style="left:266px;top:474.0px;width:1.5px;height:16.83px;background:#e98b2e"></div>
<div class="r" style="left:307px;top:474.0px;width:1px;height:16.83px;background:rgba(255,255,255,.33)"></div>
<div class="r" style="left:348px;top:474.0px;width:1px;height:16.83px;background:rgba(255,255,255,.33)"></div>
<div class="r" style="left:404.5px;top:474.0px;width:1px;height:16.83px;background:rgba(255,255,255,.33)"></div>
<div class="r" style="left:889px;top:474.0px;width:1px;height:16.83px;background:rgba(255,255,255,.33)"></div>
<div class="r" style="left:921.5px;top:474.0px;width:1px;height:16.83px;background:rgba(255,255,255,.33)"></div>
<div class="r" style="left:954.5px;top:474.0px;width:1px;height:16.83px;background:rgba(255,255,255,.33)"></div>
<div class="r" style="left:992.5px;top:474.0px;width:1px;height:16.83px;background:rgba(255,255,255,.33)"></div>
<div class="r" style="left:1025.5px;top:474.0px;width:1px;height:16.83px;background:rgba(255,255,255,.33)"></div>
<div class="t" style="left:270px;top:475.0px;height:16.83px;line-height:16.83px;font-size:11px;font-weight:bold;color:#2a1000;transform:scaleX(0.9);transform-origin:0 50%;">25 Sep</div>
<div class="t" style="left:311px;top:475.0px;height:16.83px;line-height:16.83px;font-size:11px;font-weight:bold;color:#2a1000;transform:scaleX(0.9);transform-origin:0 50%;">01 Oct</div>
<div class="t" style="left:351px;top:475.0px;height:16.83px;line-height:16.83px;font-size:10.5px;color:#2a1000;transform:scaleX(0.85);transform-origin:0 50%;">BG-290-PY</div>
<div class="r" style="left:406.5px;top:478.0px;width:1.2px;height:9px;background:#2a1000;opacity:.35"></div>
<div class="r" style="left:1px;top:490.83px;width:15.5px;height:16.83px;background:#efdca6;border-bottom:1.3px solid #3a3a3a"></div>
<div class="r" style="left:16.5px;top:490.83px;width:1.5px;height:16.83px;background:#3c3830"></div>
<div class="r" style="left:18px;top:490.83px;width:248px;height:16.83px;background:#fff;border-bottom:1px solid #d0d0d0"></div>
<div class="r" style="left:41px;top:490.83px;width:1px;height:16.83px;background:#c8c8c8"></div>
<svg style="left:19px;top:494.83px" width="13" height="13" viewBox="0 0 13 13"><path d="M3.7 2.5 Q8 1.2 12 2.3 L12.2 11.5 Q8 12.6 3.8 11.6Z" fill="url(#ig)"/><path d="M0.8 6.3 L4 4.3" stroke="#2a1a1a" stroke-width="1.1"/><path d="M10 1.8 L11.6 0.3" stroke="#c89098" stroke-width="1.2"/></svg>
<div class="t" style="left:44px;top:492.33px;height:16.83px;line-height:16.83px;font-size:10px;color:#262626;transform:scaleX(0.86);transform-origin:0 50%;">L'AUBIN FRANCOIS</div>
<div class="r" style="left:266px;top:490.83px;width:792px;height:16.83px;background:#e98b2e;border-bottom:1px solid rgba(255,255,255,.38)"></div>
<div class="r" style="left:266px;top:490.83px;width:1.5px;height:16.83px;background:#e98b2e"></div>
<div class="r" style="left:307px;top:490.83px;width:1px;height:16.83px;background:rgba(255,255,255,.33)"></div>
<div class="r" style="left:348px;top:490.83px;width:1px;height:16.83px;background:rgba(255,255,255,.33)"></div>
<div class="r" style="left:404.5px;top:490.83px;width:1px;height:16.83px;background:rgba(255,255,255,.33)"></div>
<div class="r" style="left:889px;top:490.83px;width:1px;height:16.83px;background:rgba(255,255,255,.33)"></div>
<div class="r" style="left:921.5px;top:490.83px;width:1px;height:16.83px;background:rgba(255,255,255,.33)"></div>
<div class="r" style="left:954.5px;top:490.83px;width:1px;height:16.83px;background:rgba(255,255,255,.33)"></div>
<div class="r" style="left:992.5px;top:490.83px;width:1px;height:16.83px;background:rgba(255,255,255,.33)"></div>
<div class="r" style="left:1025.5px;top:490.83px;width:1px;height:16.83px;background:rgba(255,255,255,.33)"></div>
<div class="t" style="left:270px;top:491.83px;height:16.83px;line-height:16.83px;font-size:11px;font-weight:bold;color:#2a1000;transform:scaleX(0.9);transform-origin:0 50%;">25 Sep</div>
<div class="t" style="left:311px;top:491.83px;height:16.83px;line-height:16.83px;font-size:11px;font-weight:bold;color:#2a1000;transform:scaleX(0.9);transform-origin:0 50%;">01 Oct</div>
<div class="t" style="left:351px;top:491.83px;height:16.83px;line-height:16.83px;font-size:10.5px;color:#2a1000;transform:scaleX(0.85);transform-origin:0 50%;">4317 XD 56</div>
<div class="r" style="left:406.5px;top:494.83px;width:1.2px;height:9px;background:#2a1000;opacity:.35"></div>
<div class="r" style="left:1px;top:507.66px;width:15.5px;height:16.83px;background:#efdca6;border-bottom:1.3px solid #3a3a3a"></div>
<div class="r" style="left:16.5px;top:507.66px;width:1.5px;height:16.83px;background:#3c3830"></div>
<div class="r" style="left:18px;top:507.66px;width:248px;height:16.83px;background:#fff;border-bottom:1px solid #d0d0d0"></div>
<div class="r" style="left:41px;top:507.66px;width:1px;height:16.83px;background:#c8c8c8"></div>
<svg style="left:19px;top:511.66px" width="13" height="13" viewBox="0 0 13 13"><path d="M3.7 2.5 Q8 1.2 12 2.3 L12.2 11.5 Q8 12.6 3.8 11.6Z" fill="url(#ig)"/><path d="M0.8 6.3 L4 4.3" stroke="#2a1a1a" stroke-width="1.1"/><path d="M10 1.8 L11.6 0.3" stroke="#c89098" stroke-width="1.2"/></svg>
<div class="t" style="left:44px;top:509.16px;height:16.83px;line-height:16.83px;font-size:10px;color:#262626;transform:scaleX(0.86);transform-origin:0 50%;">WAFFLART ERIC</div>
<div class="r" style="left:266px;top:507.66px;width:792px;height:16.83px;background:#b6d235;border-bottom:1px solid rgba(255,255,255,.38)"></div>
<div class="r" style="left:266px;top:507.66px;width:1.5px;height:16.83px;background:#b6d235"></div>
<div class="r" style="left:307px;top:507.66px;width:1px;height:16.83px;background:rgba(255,255,255,.33)"></div>
<div class="r" style="left:348px;top:507.66px;width:1px;height:16.83px;background:rgba(255,255,255,.33)"></div>
<div class="r" style="left:404.5px;top:507.66px;width:1px;height:16.83px;background:rgba(255,255,255,.33)"></div>
<div class="r" style="left:889px;top:507.66px;width:1px;height:16.83px;background:rgba(255,255,255,.33)"></div>
<div class="r" style="left:921.5px;top:507.66px;width:1px;height:16.83px;background:rgba(255,255,255,.33)"></div>
<div class="r" style="left:954.5px;top:507.66px;width:1px;height:16.83px;background:rgba(255,255,255,.33)"></div>
<div class="r" style="left:992.5px;top:507.66px;width:1px;height:16.83px;background:rgba(255,255,255,.33)"></div>
<div class="r" style="left:1025.5px;top:507.66px;width:1px;height:16.83px;background:rgba(255,255,255,.33)"></div>
<div class="t" style="left:270px;top:508.66px;height:16.83px;line-height:16.83px;font-size:11px;font-weight:bold;color:#102000;transform:scaleX(0.9);transform-origin:0 50%;">25 Sep</div>
<div class="t" style="left:311px;top:508.66px;height:16.83px;line-height:16.83px;font-size:11px;font-weight:bold;color:#102000;transform:scaleX(0.9);transform-origin:0 50%;">01 Oct</div>
<div class="t" style="left:351px;top:508.66px;height:16.83px;line-height:16.83px;font-size:10.5px;color:#102000;transform:scaleX(0.85);transform-origin:0 50%;">278 CEN 44</div>
<div class="r" style="left:406.5px;top:511.66px;width:1.2px;height:9px;background:#102000;opacity:.35"></div>
<div class="r" style="left:1px;top:136px;width:1057px;height:1.6px;background:#3c3830"></div>
<svg style="left:5px;top:327.03px" width="6" height="9" viewBox="0 0 6 9"><path d="M0 0 L5.5 4.5 L0 9Z" fill="#111"/></svg>
<div class="t" style="left:893px;top:324.53px;height:16.83px;line-height:16.83px;font-size:10px;color:#3a1010;transform:scaleX(0.85);transform-origin:0 50%;">-</div>
<div class="t" style="left:926px;top:324.53px;height:16.83px;line-height:16.83px;font-size:10px;color:#3a1010;transform:scaleX(0.85);transform-origin:0 50%;">-</div>
<div class="t" style="left:957px;top:358.18999999999994px;height:16.83px;line-height:16.83px;font-size:10px;color:#3a1010;transform:scaleX(0.85);transform-origin:0 50%;">API</div>
<div class="t" style="left:957px;top:391.85px;height:16.83px;line-height:16.83px;font-size:10px;color:#3a1010;transform:scaleX(0.85);transform-origin:0 50%;">API</div>
<div class="t" style="left:892px;top:442.3399999999999px;height:16.83px;line-height:16.83px;font-size:10px;color:#3a1010;transform:scaleX(0.85);transform-origin:0 50%;">X</div>
<div class="r" style="left:1px;top:524.5px;width:1115px;height:3px;background:#fff"></div>
<div class="r" style="left:266px;top:523.6px;width:792px;height:1.2px;background:#e98b2e"></div>
<div class="r" style="left:1101px;top:121px;width:15px;height:407px;background:linear-gradient(90deg,#f0f0f0,#e4e4e4)"></div>
<svg style="left:1105px;top:127px" width="7" height="4" viewBox="0 0 7 4"><path d="M0 4 L3.5 0 L7 4Z" fill="#333"/></svg>
<div class="r" style="left:1103px;top:136px;width:11px;height:13px;background:linear-gradient(90deg,#f8f8f8,#d8d8d8);border:1px solid #9a9a9a;border-radius:1px"></div>
<svg style="left:1105px;top:518px" width="7" height="4" viewBox="0 0 7 4"><path d="M0 0 H7 L3.5 4Z" fill="#333"/></svg>
<div class="r" style="left:0px;top:527.5px;width:1118px;height:115.5px;background:#fbf7e6"></div>
<div class="r" style="left:0px;top:528.5px;width:665px;height:15.5px;background:linear-gradient(#f6ecc8,#efdfae 60%,#f4e8c4);border-top:2px solid #6e6a64;border-left:2px solid #6e6a64;border-bottom:1px solid #fff"></div>
<div class="r" style="left:0px;top:544px;width:665px;height:99px;background:#fcf9ec;border-top:2px solid #6e6a64;border-left:2px solid #5a5650"></div>
<div class="t" style="left:0px;top:530px;height:14px;line-height:14px;font-size:10px;color:#222;width:665px;text-align:center;transform:scaleX(0.85);transform-origin:50% 50%;">Commentaire</div>
<div class="r" style="left:651px;top:546px;width:13.5px;height:97px;background:linear-gradient(90deg,#f6f6f6,#e4e4ea);border-left:1px solid #fff"></div>
<svg style="left:654.5px;top:551px" width="7" height="4" viewBox="0 0 7 4"><path d="M0 4 L3.5 0 L7 4Z" fill="#555"/></svg>
<svg style="left:654.5px;top:634px" width="7" height="4" viewBox="0 0 7 4"><path d="M0 0 H7 L3.5 4Z" fill="#555"/></svg>
<div class="r" style="left:667px;top:528.5px;width:148px;height:15.5px;background:linear-gradient(#f6ecc8,#efdfae 60%,#f4e8c4);border-top:2px solid #6e6a64;border-left:2px solid #6e6a64;border-bottom:1px solid #fff"></div>
<div class="r" style="left:667px;top:544px;width:148px;height:99px;background:#fcf9ec;border-top:2px solid #6e6a64;border-left:2px solid #5a5650"></div>
<div class="r" style="left:801px;top:546px;width:13.5px;height:97px;background:linear-gradient(90deg,#f6f6f6,#e4e4ea);border-left:1px solid #fff"></div>
<svg style="left:804.5px;top:551px" width="7" height="4" viewBox="0 0 7 4"><path d="M0 4 L3.5 0 L7 4Z" fill="#555"/></svg>
<svg style="left:804.5px;top:634px" width="7" height="4" viewBox="0 0 7 4"><path d="M0 0 H7 L3.5 4Z" fill="#555"/></svg>
<div class="r" style="left:818px;top:528.5px;width:147px;height:15.5px;background:linear-gradient(#f6ecc8,#efdfae 60%,#f4e8c4);border-top:2px solid #6e6a64;border-left:2px solid #6e6a64;border-bottom:1px solid #fff"></div>
<div class="r" style="left:818px;top:544px;width:147px;height:99px;background:#fcf9ec;border-top:2px solid #6e6a64;border-left:2px solid #5a5650"></div>
<div class="t" style="left:591.5px;top:530px;height:14px;line-height:14px;font-size:10px;color:#222;width:600px;text-align:center;transform:scaleX(0.85);transform-origin:50% 50%;">Atelier</div>
<div class="r" style="left:951px;top:546px;width:13.5px;height:97px;background:linear-gradient(90deg,#f6f6f6,#e4e4ea);border-left:1px solid #fff"></div>
<svg style="left:954.5px;top:551px" width="7" height="4" viewBox="0 0 7 4"><path d="M0 4 L3.5 0 L7 4Z" fill="#555"/></svg>
<svg style="left:954.5px;top:634px" width="7" height="4" viewBox="0 0 7 4"><path d="M0 0 H7 L3.5 4Z" fill="#555"/></svg>
<div class="r" style="left:968.5px;top:528.5px;width:146.5px;height:15.5px;background:linear-gradient(#f6ecc8,#efdfae 60%,#f4e8c4);border-top:2px solid #6e6a64;border-left:2px solid #6e6a64;border-bottom:1px solid #fff"></div>
<div class="r" style="left:968.5px;top:544px;width:146.5px;height:99px;background:#fcf9ec;border-top:2px solid #6e6a64;border-left:2px solid #5a5650"></div>
<div class="t" style="left:741.75px;top:530px;height:14px;line-height:14px;font-size:10px;color:#222;width:600px;text-align:center;transform:scaleX(0.85);transform-origin:50% 50%;">Mouvements</div>
<div class="r" style="left:1101.0px;top:546px;width:13.5px;height:97px;background:linear-gradient(90deg,#f6f6f6,#e4e4ea);border-left:1px solid #fff"></div>
<svg style="left:1104.5px;top:551px" width="7" height="4" viewBox="0 0 7 4"><path d="M0 4 L3.5 0 L7 4Z" fill="#555"/></svg>
<svg style="left:1104.5px;top:634px" width="7" height="4" viewBox="0 0 7 4"><path d="M0 0 H7 L3.5 4Z" fill="#555"/></svg>
<svg style="left:626px;top:644px" width="30" height="2"><line x1="0" y1="1" x2="30" y2="1" stroke="#333" stroke-width="1" stroke-dasharray="1 2"/></svg>
<svg style="left:666px;top:556px" width="2" height="30"><line x1="1" y1="0" x2="1" y2="30" stroke="#333" stroke-width="1" stroke-dasharray="1 2"/></svg>
<svg style="left:816px;top:566px" width="2" height="30"><line x1="1" y1="0" x2="1" y2="30" stroke="#333" stroke-width="1" stroke-dasharray="1 2"/></svg>
<svg style="left:967px;top:570px" width="2" height="30"><line x1="1" y1="0" x2="1" y2="30" stroke="#333" stroke-width="1" stroke-dasharray="1 2"/></svg>
<div class="r" style="left:0px;top:643px;width:1280px;height:29px;background:linear-gradient(#f4e8c8,#efe0b4)"></div>
<div class="r" style="left:0px;top:643px;width:1118px;height:1.5px;background:#c8b890"></div>
<div class="r" style="left:3px;top:650.5px;width:78px;height:19.5px;background:linear-gradient(#efdfb8,#e9d6aa);border:1px solid #d2b884;border-radius:1px"></div>
<div class="t" style="left:24.5px;top:651px;height:19.5px;line-height:19.5px;font-size:10px;color:#1a1a1a;transform:scaleX(0.86);transform-origin:0 50%;">Rechercher...</div>
<svg style="left:6px;top:653px" width="15" height="15" viewBox="0 0 15 15"><circle cx="9" cy="6" r="4.5" fill="#dcf0fa" stroke="#6a8aa8" stroke-width="1.4"/><path d="M6 9.5 L1.5 14" stroke="#8a6a3a" stroke-width="2.2"/></svg>
<div class="r" style="left:83px;top:650.5px;width:78px;height:19.5px;background:linear-gradient(#efdfb8,#e9d6aa);border:1px solid #d2b884;border-radius:1px"></div>
<div class="t" style="left:109px;top:651px;height:19.5px;line-height:19.5px;font-size:10px;color:#1a1a1a;transform:scaleX(0.86);transform-origin:0 50%;">Nouveau...</div>
<svg style="left:91px;top:653px" width="15" height="15" viewBox="0 0 15 15"><path d="M3 1 H10 L13 4 V14 H3Z" fill="#c8e0f4" stroke="#7a9ab8" stroke-width=".8"/><path d="M10 1 V4 H13" fill="#e8f4fc" stroke="#7a9ab8" stroke-width=".6"/></svg>
<div class="r" style="left:163px;top:650.5px;width:78px;height:19.5px;background:linear-gradient(#efdfb8,#e9d6aa);border:1px solid #d2b884;border-radius:1px"></div>
<div class="t" style="left:191.5px;top:651px;height:19.5px;line-height:19.5px;font-size:10px;color:#1a1a1a;transform:scaleX(0.86);transform-origin:0 50%;">Modifier...</div>
<svg style="left:174px;top:653px" width="15" height="15" viewBox="0 0 15 15"><path d="M1.5 2 H10 V14 H1.5Z" fill="#e4ecf4" stroke="#7a8a9a" stroke-width=".8"/><path d="M4 11 L12 2 L14 3.5 L6 12.5 L3.5 13.5Z" fill="#2a5aa0"/><path d="M12 2 L13.5 0.8 L14.8 2.2 L14 3.5Z" fill="#e0a020"/></svg>
<div class="r" style="left:243px;top:650.5px;width:78px;height:19.5px;background:linear-gradient(#efdfb8,#e9d6aa);border:1px solid #d2b884;border-radius:1px"></div>
<div class="t" style="left:271.5px;top:651px;height:19.5px;line-height:19.5px;font-size:10px;color:#1a1a1a;transform:scaleX(0.86);transform-origin:0 50%;">Supprimer</div>
<svg style="left:254.5px;top:653px" width="15" height="15" viewBox="0 0 15 15"><path d="M2.5 2.5 L12.5 12.5 M12.5 2.5 L2.5 12.5" stroke="#d01818" stroke-width="3.4" stroke-linecap="round"/></svg>
<div class="r" style="left:323px;top:650.5px;width:78px;height:19.5px;background:linear-gradient(#fefcf6,#f8f2e2);border:1px solid #d2b884;border-radius:1px"></div>
<div class="t" style="left:62.0px;top:651px;height:19.5px;line-height:19.5px;font-size:10px;color:#999;width:600px;text-align:center;transform:scaleX(0.86);transform-origin:50% 50%;">Concrétiser...</div>
<div class="r" style="left:403px;top:650.5px;width:78px;height:19.5px;background:linear-gradient(#efdfb8,#e9d6aa);border:1px solid #d2b884;border-radius:1px"></div>
<div class="t" style="left:430px;top:651px;height:19.5px;line-height:19.5px;font-size:10px;color:#1a1a1a;transform:scaleX(0.86);transform-origin:0 50%;">Imprimer...</div>
<svg style="left:412px;top:653px" width="15" height="15" viewBox="0 0 15 15"><path d="M1 6 H14 V11.5 H1Z" fill="#b8c0c8" stroke="#6a7078" stroke-width=".8"/><path d="M4 1.5 H11 V6 H4Z" fill="#fff" stroke="#888" stroke-width=".6"/><path d="M4 10 H11 V14 H4Z" fill="#fff" stroke="#888" stroke-width=".6"/><circle cx="12" cy="8" r=".8" fill="#3a3"/></svg>
<div class="r" style="left:0px;top:672px;width:1280px;height:16px;background:linear-gradient(#f4e6bc,#efdea8)"></div>
<div class="r" style="left:0px;top:672px;width:1280px;height:1.5px;background:#e0cc70"></div>
<div class="r" style="left:0px;top:686.5px;width:1280px;height:1.5px;background:#e0cc70"></div>
<div class="r" style="left:0px;top:672px;width:1.5px;height:16px;background:#e0cc70"></div>
<div class="r" style="left:425px;top:672px;width:1.5px;height:16px;background:#e0cc70"></div>
<div class="r" style="left:853px;top:672px;width:427px;height:16px;border:1px solid #4a4030;border-right-width:1.5px;border-bottom-width:1.5px"></div>
<div class="t" style="left:3px;top:673px;height:14px;line-height:14px;font-size:10px;color:#222;transform:scaleX(0.9);transform-origin:0 50%;">Ok</div>
<div class="t" style="left:429px;top:673px;height:14px;line-height:14px;font-size:10px;color:#222;transform:scaleX(0.85);transform-origin:0 50%;">Dernier accès à 13:23:51</div>
<div class="t" style="left:857px;top:673.5px;height:14px;line-height:14px;font-size:10px;color:#222;transform:scaleX(0.85);transform-origin:0 50%;">Dernier traitement réalisé en 505 ms</div>
<div class="r" style="left:1116px;top:73px;width:164px;height:570px;background:#f3e8c4"></div>
<div class="r" style="left:1116px;top:73px;width:4px;height:570px;background:linear-gradient(90deg,#f6eed2,#efe2b6)"></div>
<div class="r" style="left:1120px;top:73px;width:160px;height:113px;background:#ececec;border-left:1px solid #c0c0c0"></div>
<div class="r" style="left:1122px;top:76px;width:20px;height:15.5px;background:linear-gradient(#f4f4f4,#c8c8c8);border:1px solid #606060;border-radius:1px"></div>
<svg style="left:1129px;top:80px" width="6" height="8" viewBox="0 0 6 8"><path d="M5 0.5 L1 4 L5 7.5" fill="none" stroke="#333" stroke-width="1"/></svg>
<div class="r" style="left:1257px;top:76px;width:20px;height:15.5px;background:linear-gradient(#f4f4f4,#c8c8c8);border:1px solid #606060;border-radius:1px"></div>
<svg style="left:1264px;top:80px" width="6" height="8" viewBox="0 0 6 8"><path d="M1 0.5 L5 4 L1 7.5" fill="none" stroke="#333" stroke-width="1"/></svg>
<div class="t" style="left:899.5px;top:76px;height:15.5px;line-height:15.5px;font-size:10.5px;color:#222;width:600px;text-align:center;transform:scaleX(0.8);transform-origin:50% 50%;">Septembre 2013</div>
<div class="r" style="left:1121px;top:94px;width:156.5px;height:13.5px;background:#f8f8f6"></div>
<div class="r" style="left:1121px;top:94px;width:156.5px;height:1.2px;background:#303030"></div>
<div class="r" style="left:1121px;top:107px;width:156.5px;height:1.3px;background:#303030"></div>
<div class="r" style="left:1121.3px;top:94px;width:1.2px;height:14px;background:#303030"></div>
<div class="t" style="left:832.4000000000001px;top:94.5px;height:13px;line-height:13px;font-size:10.5px;color:#222;width:600px;text-align:center;transform:scaleX(0.8);transform-origin:50% 50%;">Lun</div>
<div class="r" style="left:1143.5px;top:94px;width:1.2px;height:14px;background:#303030"></div>
<div class="t" style="left:854.6500000000001px;top:94.5px;height:13px;line-height:13px;font-size:10.5px;color:#222;width:600px;text-align:center;transform:scaleX(0.8);transform-origin:50% 50%;">Mar</div>
<div class="r" style="left:1165.8px;top:94px;width:1.2px;height:14px;background:#303030"></div>
<div class="t" style="left:877.0px;top:94.5px;height:13px;line-height:13px;font-size:10.5px;color:#222;width:600px;text-align:center;transform:scaleX(0.8);transform-origin:50% 50%;">Mer</div>
<div class="r" style="left:1188.2px;top:94px;width:1.2px;height:14px;background:#303030"></div>
<div class="t" style="left:899.3499999999999px;top:94.5px;height:13px;line-height:13px;font-size:10.5px;color:#222;width:600px;text-align:center;transform:scaleX(0.8);transform-origin:50% 50%;">Jeu</div>
<div class="r" style="left:1210.5px;top:94px;width:1.2px;height:14px;background:#303030"></div>
<div class="t" style="left:921.6500000000001px;top:94.5px;height:13px;line-height:13px;font-size:10.5px;color:#222;width:600px;text-align:center;transform:scaleX(0.8);transform-origin:50% 50%;">Ven</div>
<div class="r" style="left:1232.8px;top:94px;width:1.2px;height:14px;background:#303030"></div>
<div class="t" style="left:943.9499999999998px;top:94.5px;height:13px;line-height:13px;font-size:10.5px;color:#222;width:600px;text-align:center;transform:scaleX(0.8);transform-origin:50% 50%;">Sam</div>
<div class="r" style="left:1255.1px;top:94px;width:1.2px;height:14px;background:#303030"></div>
<div class="t" style="left:966.25px;top:94.5px;height:13px;line-height:13px;font-size:10.5px;color:#222;width:600px;text-align:center;transform:scaleX(0.8);transform-origin:50% 50%;">Dim</div>
<div class="r" style="left:1277px;top:94px;width:1.2px;height:14px;background:#303030"></div>
<div class="r" style="left:1121px;top:107.5px;width:156.5px;height:76px;background:#b4b4b4"></div>
<div class="r" style="left:1121.3px;top:107.5px;width:22.200000000000045px;height:12.5px;background:#f4f4f0;border-right:1px solid #d8d8d8"></div>
<div class="r" style="left:1143.5px;top:107.5px;width:22.299999999999955px;height:12.5px;background:#f4f4f0;border-right:1px solid #d8d8d8"></div>
<div class="r" style="left:1165.8px;top:107.5px;width:22.40000000000009px;height:12.5px;background:#f4f4f0;border-right:1px solid #d8d8d8"></div>
<div class="r" style="left:1188.2px;top:107.5px;width:22.299999999999955px;height:12.5px;background:#f4f4f0;border-right:1px solid #d8d8d8"></div>
<div class="r" style="left:1210.5px;top:107.5px;width:22.299999999999955px;height:12.5px;background:#f4f4f0;border-right:1px solid #d8d8d8"></div>
<div class="r" style="left:1232.8px;top:107.5px;width:22.299999999999955px;height:12.5px;background:#f4f4f0;border-right:1px solid #d8d8d8"></div>
<div class="r" style="left:1143.5px;top:170.8px;width:133.9000000000001px;height:12.7px;background:#f4f4f0"></div>
<div class="r" style="left:1164.8px;top:170.8px;width:1px;height:12.7px;background:#d8d8d8"></div>
<div class="r" style="left:1187.2px;top:170.8px;width:1px;height:12.7px;background:#d8d8d8"></div>
<div class="r" style="left:1209.5px;top:170.8px;width:1px;height:12.7px;background:#d8d8d8"></div>
<div class="r" style="left:1121px;top:107.5px;width:1px;height:76px;background:#d0d0d0"></div>
<div class="r" style="left:1210.5px;top:158.1px;width:44.59999999999991px;height:12.7px;background:#22cc22"></div>
<div class="r" style="left:1121.3px;top:170.8px;width:22.200000000000045px;height:12.7px;background:#22cc22"></div>
<div class="t" style="left:966.25px;top:107.8px;height:12.5px;line-height:12.5px;font-size:11px;color:#222;width:600px;text-align:center;transform:scaleX(0.85);transform-origin:50% 50%;">1</div>
<div class="t" style="left:832.4000000000001px;top:120.3px;height:12.5px;line-height:12.5px;font-size:11px;color:#222;width:600px;text-align:center;transform:scaleX(0.85);transform-origin:50% 50%;">2</div>
<div class="t" style="left:854.6500000000001px;top:120.3px;height:12.5px;line-height:12.5px;font-size:11px;color:#222;width:600px;text-align:center;transform:scaleX(0.85);transform-origin:50% 50%;">3</div>
<div class="t" style="left:877.0px;top:120.3px;height:12.5px;line-height:12.5px;font-size:11px;color:#222;width:600px;text-align:center;transform:scaleX(0.85);transform-origin:50% 50%;">4</div>
<div class="t" style="left:899.3499999999999px;top:120.3px;height:12.5px;line-height:12.5px;font-size:11px;color:#222;width:600px;text-align:center;transform:scaleX(0.85);transform-origin:50% 50%;">5</div>
<div class="t" style="left:921.6500000000001px;top:120.3px;height:12.5px;line-height:12.5px;font-size:11px;color:#222;width:600px;text-align:center;transform:scaleX(0.85);transform-origin:50% 50%;">6</div>
<div class="t" style="left:943.9499999999998px;top:120.3px;height:12.5px;line-height:12.5px;font-size:11px;color:#222;width:600px;text-align:center;transform:scaleX(0.85);transform-origin:50% 50%;">7</div>
<div class="t" style="left:966.25px;top:120.3px;height:12.5px;line-height:12.5px;font-size:11px;color:#222;width:600px;text-align:center;transform:scaleX(0.85);transform-origin:50% 50%;">8</div>
<div class="t" style="left:832.4000000000001px;top:133.0px;height:12.5px;line-height:12.5px;font-size:11px;color:#222;width:600px;text-align:center;transform:scaleX(0.85);transform-origin:50% 50%;">9</div>
<div class="t" style="left:854.6500000000001px;top:133.0px;height:12.5px;line-height:12.5px;font-size:11px;color:#222;width:600px;text-align:center;transform:scaleX(0.85);transform-origin:50% 50%;">10</div>
<div class="t" style="left:877.0px;top:133.0px;height:12.5px;line-height:12.5px;font-size:11px;color:#222;width:600px;text-align:center;transform:scaleX(0.85);transform-origin:50% 50%;">11</div>
<div class="t" style="left:899.3499999999999px;top:133.0px;height:12.5px;line-height:12.5px;font-size:11px;color:#222;width:600px;text-align:center;transform:scaleX(0.85);transform-origin:50% 50%;">12</div>
<div class="t" style="left:921.6500000000001px;top:133.0px;height:12.5px;line-height:12.5px;font-size:11px;color:#222;width:600px;text-align:center;transform:scaleX(0.85);transform-origin:50% 50%;">13</div>
<div class="t" style="left:943.9499999999998px;top:133.0px;height:12.5px;line-height:12.5px;font-size:11px;color:#222;width:600px;text-align:center;transform:scaleX(0.85);transform-origin:50% 50%;">14</div>
<div class="t" style="left:966.25px;top:133.0px;height:12.5px;line-height:12.5px;font-size:11px;color:#222;width:600px;text-align:center;transform:scaleX(0.85);transform-origin:50% 50%;">15</div>
<div class="t" style="left:832.4000000000001px;top:145.70000000000002px;height:12.5px;line-height:12.5px;font-size:11px;color:#222;width:600px;text-align:center;transform:scaleX(0.85);transform-origin:50% 50%;">16</div>
<div class="t" style="left:854.6500000000001px;top:145.70000000000002px;height:12.5px;line-height:12.5px;font-size:11px;color:#222;width:600px;text-align:center;transform:scaleX(0.85);transform-origin:50% 50%;">17</div>
<div class="t" style="left:877.0px;top:145.70000000000002px;height:12.5px;line-height:12.5px;font-size:11px;color:#222;width:600px;text-align:center;transform:scaleX(0.85);transform-origin:50% 50%;">18</div>
<div class="t" style="left:899.3499999999999px;top:145.70000000000002px;height:12.5px;line-height:12.5px;font-size:11px;color:#222;width:600px;text-align:center;transform:scaleX(0.85);transform-origin:50% 50%;">19</div>
<div class="t" style="left:921.6500000000001px;top:145.70000000000002px;height:12.5px;line-height:12.5px;font-size:11px;color:#222;width:600px;text-align:center;transform:scaleX(0.85);transform-origin:50% 50%;">20</div>
<div class="t" style="left:943.9499999999998px;top:145.70000000000002px;height:12.5px;line-height:12.5px;font-size:11px;color:#222;width:600px;text-align:center;transform:scaleX(0.85);transform-origin:50% 50%;">21</div>
<div class="t" style="left:966.25px;top:145.70000000000002px;height:12.5px;line-height:12.5px;font-size:11px;color:#222;width:600px;text-align:center;transform:scaleX(0.85);transform-origin:50% 50%;">22</div>
<div class="t" style="left:832.4000000000001px;top:158.4px;height:12.5px;line-height:12.5px;font-size:11px;color:#222;width:600px;text-align:center;transform:scaleX(0.85);transform-origin:50% 50%;">23</div>
<div class="t" style="left:854.6500000000001px;top:158.4px;height:12.5px;line-height:12.5px;font-size:11px;color:#222;width:600px;text-align:center;transform:scaleX(0.85);transform-origin:50% 50%;">24</div>
<div class="t" style="left:877.0px;top:158.4px;height:12.5px;line-height:12.5px;font-size:11px;color:#222;width:600px;text-align:center;transform:scaleX(0.85);transform-origin:50% 50%;">25</div>
<div class="t" style="left:899.3499999999999px;top:158.4px;height:12.5px;line-height:12.5px;font-size:11px;color:#222;width:600px;text-align:center;transform:scaleX(0.85);transform-origin:50% 50%;">26</div>
<div class="t" style="left:921.6500000000001px;top:158.4px;height:12.5px;line-height:12.5px;font-size:11px;color:#222;width:600px;text-align:center;transform:scaleX(0.85);transform-origin:50% 50%;">27</div>
<div class="t" style="left:943.9499999999998px;top:158.4px;height:12.5px;line-height:12.5px;font-size:11px;color:#222;width:600px;text-align:center;transform:scaleX(0.85);transform-origin:50% 50%;">28</div>
<div class="t" style="left:966.25px;top:158.4px;height:12.5px;line-height:12.5px;font-size:11px;color:#222;width:600px;text-align:center;transform:scaleX(0.85);transform-origin:50% 50%;">29</div>
<div class="t" style="left:832.4000000000001px;top:171.10000000000002px;height:12.5px;line-height:12.5px;font-size:11px;color:#222;width:600px;text-align:center;transform:scaleX(0.85);transform-origin:50% 50%;">30</div>
<div class="t" style="left:675px;top:170.8px;height:12.7px;line-height:12.7px;font-size:10.5px;color:#222;width:600px;text-align:right;transform:scaleX(0.82);transform-origin:100% 50%;">&gt; Aujourd'hui</div>
<div class="r" style="left:1121px;top:183.5px;width:157px;height:2.5px;background:#909090"></div>
<div class="r" style="left:1121px;top:190.5px;width:133px;height:23.5px;background:#fafafa;border:1px solid #d8d8d8"></div>
<div class="r" style="left:1121px;top:191px;width:133px;height:10.5px;background:#22dd22"></div>
<div class="t" style="left:887.5px;top:190.5px;height:11px;line-height:11px;font-size:10.5px;color:#0a3a0a;width:600px;text-align:center;transform:scaleX(0.82);transform-origin:50% 50%;">Vendredi 27 Septembre</div>
<div class="t" style="left:887.5px;top:201px;height:12.5px;line-height:12.5px;font-size:10.5px;color:#333;width:600px;text-align:center;transform:scaleX(0.82);transform-origin:50% 50%;">HR=128:30 (-145%) | VC=0</div>
<div class="r" style="left:1256px;top:190.5px;width:22px;height:23px;background:linear-gradient(#f4f4f4,#c4c4c4);border:1px solid #707070;border-radius:1px"></div>
<svg style="left:1259px;top:194px" width="16" height="15" viewBox="0 0 16 15"><path d="M2 14 Q2 6 9 5 L9 1.5 L15 7 L9 12.5 L9 9 Q5 9 2 14Z" fill="#2a8a3a" stroke="#0a4a1a" stroke-width=".7"/></svg>
<div class="r" style="left:1120px;top:217.5px;width:158px;height:16.5px;background:linear-gradient(#f4f4f4,#dcdcdc);border-top:1px solid #c8c8c8"></div>
<div class="t" style="left:899.0px;top:217.5px;height:16.5px;line-height:16.5px;font-size:10.5px;color:#333;width:600px;text-align:center;transform:scaleX(0.82);transform-origin:50% 50%;">Dossier d'intervention sélectionné</div>
<div class="r" style="left:1120px;top:234px;width:146px;height:106px;background:#e8666a"></div>
<div class="t" style="left:1121px;top:235.0px;height:10.5px;line-height:10.5px;font-size:10.5px;color:#3a0a0a;transform:scaleX(0.84);transform-origin:0 50%;">Client : GABORIAU JOEL</div>
<div class="t" style="left:1121px;top:245.45px;height:10.5px;line-height:10.5px;font-size:10.5px;color:#3a0a0a;transform:scaleX(0.84);transform-origin:0 50%;">Marque &nbsp;: VOLVO</div>
<div class="t" style="left:1121px;top:255.9px;height:10.5px;line-height:10.5px;font-size:10.5px;color:#3a0a0a;transform:scaleX(0.84);transform-origin:0 50%;">Modèle &nbsp;: V60</div>
<div class="t" style="left:1121px;top:266.35px;height:10.5px;line-height:10.5px;font-size:10.5px;color:#3a0a0a;transform:scaleX(0.84);transform-origin:0 50%;">Immatriculation : 224CHL44</div>
<div class="t" style="left:1121px;top:276.8px;height:10.5px;line-height:10.5px;font-size:10.5px;color:#3a0a0a;transform:scaleX(0.84);transform-origin:0 50%;">OR :</div>
<div class="t" style="left:1121px;top:287.25px;height:10.5px;line-height:10.5px;font-size:10.5px;color:#3a0a0a;transform:scaleX(0.84);transform-origin:0 50%;">Réception &nbsp;: 24/09/2013 à 09:15</div>
<div class="t" style="left:1121px;top:297.7px;height:10.5px;line-height:10.5px;font-size:10.5px;color:#3a0a0a;transform:scaleX(0.84);transform-origin:0 50%;">Restitution &nbsp;: 28/09/2013 à 16:00</div>
<div class="t" style="left:1121px;top:308.15px;height:10.5px;line-height:10.5px;font-size:10.5px;color:#3a0a0a;transform:scaleX(0.84);transform-origin:0 50%;">Durée totale &nbsp;: 8:30</div>
<div class="t" style="left:1121px;top:318.6px;height:10.5px;line-height:10.5px;font-size:10.5px;color:#3a0a0a;transform:scaleX(0.84);transform-origin:0 50%;">Durée planifiée &nbsp;: 8:30</div>
<div class="t" style="left:1121px;top:329.05px;height:10.5px;line-height:10.5px;font-size:10.5px;color:#3a0a0a;transform:scaleX(0.84);transform-origin:0 50%;">Véhicule de courtoisie &nbsp;: Non</div>
<div class="r" style="left:1266px;top:234px;width:12px;height:106px;background:linear-gradient(90deg,#f0f0f0,#e6e6e6)"></div>
<svg style="left:1269px;top:239px" width="6" height="4" viewBox="0 0 6 4"><path d="M0 4 L3 0 L6 4Z" fill="#222"/></svg>
<div class="r" style="left:1267px;top:249px;width:10px;height:70px;background:linear-gradient(90deg,#f8f8f8,#d4d4d4);border:1px solid #a0a0a0;border-radius:1px"></div>
<div class="r" style="left:1270px;top:280px;width:4px;height:1px;background:#555"></div>
<div class="r" style="left:1270px;top:282px;width:4px;height:1px;background:#555"></div>
<div class="r" style="left:1270px;top:284px;width:4px;height:1px;background:#555"></div>
<svg style="left:1269px;top:331px" width="6" height="4" viewBox="0 0 6 4"><path d="M0 0 H6 L3 4Z" fill="#222"/></svg>
<svg style="left:1185px;top:341px" width="30" height="2"><line x1="0" y1="1" x2="30" y2="1" stroke="#333" stroke-width="1" stroke-dasharray="1 2"/></svg>
<svg style="left:1117px;top:346px" width="2" height="32"><line x1="1" y1="0" x2="1" y2="32" stroke="#333" stroke-width="1" stroke-dasharray="1 2"/></svg>
<div class="r" style="left:1120px;top:345.5px;width:158px;height:297px;background:#fff;border:1px solid #a8a8a8"></div>
<div class="r" style="left:1121px;top:346.5px;width:143px;height:15.5px;background:linear-gradient(#fcfcfc,#ececec)"></div>
<div class="r" style="left:1121px;top:361.5px;width:143px;height:1.5px;background:#a0a0a0"></div>
<div class="r" style="left:1148px;top:346.5px;width:1px;height:15.5px;background:#a0a0a0"></div>
<div class="r" style="left:1224px;top:346.5px;width:1px;height:15.5px;background:#a0a0a0"></div>
<div class="t" style="left:1124px;top:346.5px;height:15.5px;line-height:15.5px;font-size:11px;font-weight:bold;color:#1a1a1a;transform:scaleX(0.86);transform-origin:0 50%;">Ordr</div>
<div class="t" style="left:1151px;top:346.5px;height:15.5px;line-height:15.5px;font-size:11px;font-weight:bold;color:#1a1a1a;transform:scaleX(0.86);transform-origin:0 50%;">Opération</div>
<div class="t" style="left:1227px;top:346.5px;height:15.5px;line-height:15.5px;font-size:11px;font-weight:bold;color:#1a1a1a;transform:scaleX(0.86);transform-origin:0 50%;">Durée</div>
<div class="r" style="left:1264px;top:346.5px;width:13px;height:295px;background:linear-gradient(90deg,#f4f4f4,#e8e8ea)"></div>
<svg style="left:1267px;top:352px" width="7" height="4" viewBox="0 0 7 4"><path d="M0 4 L3.5 0 L7 4Z" fill="#999"/></svg>
<svg style="left:1267px;top:634px" width="7" height="4" viewBox="0 0 7 4"><path d="M0 0 H7 L3.5 4Z" fill="#999"/></svg>
<div class="r" style="left:1121px;top:363.0px;width:143px;height:16.9px;background:#e4e4e4;border-bottom:1px solid #b8b8b8"></div>
<div class="r" style="left:1121px;top:363.0px;width:13px;height:16.9px;background:#f6f6f6;border-right:1px solid #a0a0a0;border-bottom:1px solid #a0a0a0"></div>
<div class="r" style="left:1134px;top:363.0px;width:14px;height:16.9px;background:#fdfdfd;border-right:1px solid #909090;border-bottom:1px solid #a0a0a0"></div>
<div class="r" style="left:1224px;top:363.0px;width:1px;height:16.9px;background:#c0c0c0"></div>
<div class="t" style="left:841.0px;top:364.5px;height:16.9px;line-height:16.9px;font-size:10.5px;font-weight:bold;color:#1a1a1a;width:600px;text-align:center;transform:scaleX(0.92);transform-origin:50% 50%;">1</div>
<svg style="left:1150px;top:365.5px" width="12" height="12" viewBox="0 0 12 12"><path d="M0.5 0.5 H11.5 L0.5 11.5Z" fill="#8a2a10" stroke="#5a4a3a" stroke-width=".7"/><path d="M11.5 0.5 L0.5 11.5" stroke="#fff" stroke-width=".6"/></svg>
<div class="t" style="left:1163px;top:365.0px;height:16.9px;line-height:16.9px;font-size:10.5px;color:#222;transform:scaleX(0.82);transform-origin:0 50%;">Démontage /</div>
<div class="t" style="left:1227px;top:363.0px;height:16.9px;line-height:16.9px;font-size:10.5px;color:#222;transform:scaleX(0.85);transform-origin:0 50%;">2:30</div>
<div class="r" style="left:1121px;top:379.9px;width:143px;height:16.9px;background:#e4e4e4;border-bottom:1px solid #b8b8b8"></div>
<div class="r" style="left:1121px;top:379.9px;width:13px;height:16.9px;background:#f6f6f6;border-right:1px solid #a0a0a0;border-bottom:1px solid #a0a0a0"></div>
<div class="r" style="left:1134px;top:379.9px;width:14px;height:16.9px;background:#fdfdfd;border-right:1px solid #909090;border-bottom:1px solid #a0a0a0"></div>
<div class="r" style="left:1224px;top:379.9px;width:1px;height:16.9px;background:#c0c0c0"></div>
<div class="t" style="left:841.0px;top:381.4px;height:16.9px;line-height:16.9px;font-size:10.5px;font-weight:bold;color:#1a1a1a;width:600px;text-align:center;transform:scaleX(0.92);transform-origin:50% 50%;">2</div>
<svg style="left:1150px;top:382.4px" width="12" height="12" viewBox="0 0 12 12"><path d="M0.5 0.5 H11.5 L0.5 11.5Z" fill="#e8a020" stroke="#5a4a3a" stroke-width=".7"/><path d="M11.5 0.5 L0.5 11.5" stroke="#fff" stroke-width=".6"/></svg>
<div class="t" style="left:1163px;top:381.9px;height:16.9px;line-height:16.9px;font-size:10.5px;color:#222;transform:scaleX(0.82);transform-origin:0 50%;">Prépa /</div>
<div class="t" style="left:1227px;top:379.9px;height:16.9px;line-height:16.9px;font-size:10.5px;color:#222;transform:scaleX(0.85);transform-origin:0 50%;">2:00</div>
<div class="r" style="left:1121px;top:396.8px;width:143px;height:16.9px;background:#e4e4e4;border-bottom:1px solid #b8b8b8"></div>
<div class="r" style="left:1121px;top:396.8px;width:13px;height:16.9px;background:#f6f6f6;border-right:1px solid #a0a0a0;border-bottom:1px solid #a0a0a0"></div>
<div class="r" style="left:1134px;top:396.8px;width:14px;height:16.9px;background:#fdfdfd;border-right:1px solid #909090;border-bottom:1px solid #a0a0a0"></div>
<div class="r" style="left:1224px;top:396.8px;width:1px;height:16.9px;background:#c0c0c0"></div>
<div class="t" style="left:841.0px;top:398.3px;height:16.9px;line-height:16.9px;font-size:10.5px;font-weight:bold;color:#1a1a1a;width:600px;text-align:center;transform:scaleX(0.92);transform-origin:50% 50%;">3</div>
<svg style="left:1150px;top:399.3px" width="12" height="12" viewBox="0 0 12 12"><path d="M0.5 0.5 H11.5 L0.5 11.5Z" fill="#0a5a1a" stroke="#5a4a3a" stroke-width=".7"/><path d="M11.5 0.5 L0.5 11.5" stroke="#fff" stroke-width=".6"/></svg>
<div class="t" style="left:1163px;top:398.8px;height:16.9px;line-height:16.9px;font-size:10.5px;color:#222;transform:scaleX(0.82);transform-origin:0 50%;">Peinture</div>
<div class="t" style="left:1227px;top:396.8px;height:16.9px;line-height:16.9px;font-size:10.5px;color:#222;transform:scaleX(0.85);transform-origin:0 50%;">1:00</div>
<div class="r" style="left:1121px;top:413.7px;width:143px;height:16.9px;background:#e4e4e4;border-bottom:1px solid #b8b8b8"></div>
<div class="r" style="left:1121px;top:413.7px;width:13px;height:16.9px;background:#f6f6f6;border-right:1px solid #a0a0a0;border-bottom:1px solid #a0a0a0"></div>
<div class="r" style="left:1134px;top:413.7px;width:14px;height:16.9px;background:#fdfdfd;border-right:1px solid #909090;border-bottom:1px solid #a0a0a0"></div>
<div class="r" style="left:1224px;top:413.7px;width:1px;height:16.9px;background:#c0c0c0"></div>
<div class="t" style="left:841.0px;top:415.2px;height:16.9px;line-height:16.9px;font-size:10.5px;font-weight:bold;color:#1a1a1a;width:600px;text-align:center;transform:scaleX(0.92);transform-origin:50% 50%;">4</div>
<svg style="left:1150px;top:416.2px" width="12" height="12" viewBox="0 0 12 12"><path d="M0.5 0.5 H11.5 L0.5 11.5Z" fill="#20b020" stroke="#5a4a3a" stroke-width=".7"/><path d="M11.5 0.5 L0.5 11.5" stroke="#fff" stroke-width=".6"/></svg>
<div class="t" style="left:1163px;top:415.7px;height:16.9px;line-height:16.9px;font-size:10.5px;color:#222;transform:scaleX(0.82);transform-origin:0 50%;">Etuvage</div>
<div class="t" style="left:1227px;top:413.7px;height:16.9px;line-height:16.9px;font-size:10.5px;color:#222;transform:scaleX(0.85);transform-origin:0 50%;">0:15</div>
<div class="r" style="left:1121px;top:430.6px;width:143px;height:16.9px;background:#e4e4e4;border-bottom:1px solid #b8b8b8"></div>
<div class="r" style="left:1121px;top:430.6px;width:13px;height:16.9px;background:#f6f6f6;border-right:1px solid #a0a0a0;border-bottom:1px solid #a0a0a0"></div>
<div class="r" style="left:1134px;top:430.6px;width:14px;height:16.9px;background:#fdfdfd;border-right:1px solid #909090;border-bottom:1px solid #a0a0a0"></div>
<div class="r" style="left:1224px;top:430.6px;width:1px;height:16.9px;background:#c0c0c0"></div>
<div class="t" style="left:841.0px;top:432.1px;height:16.9px;line-height:16.9px;font-size:10.5px;font-weight:bold;color:#1a1a1a;width:600px;text-align:center;transform:scaleX(0.92);transform-origin:50% 50%;">5</div>
<svg style="left:1150px;top:433.1px" width="12" height="12" viewBox="0 0 12 12"><path d="M0.5 0.5 H11.5 L0.5 11.5Z" fill="#e06020" stroke="#5a4a3a" stroke-width=".7"/><path d="M11.5 0.5 L0.5 11.5" stroke="#fff" stroke-width=".6"/></svg>
<div class="t" style="left:1163px;top:432.6px;height:16.9px;line-height:16.9px;font-size:10.5px;color:#222;transform:scaleX(0.82);transform-origin:0 50%;">Démarouflage</div>
<div class="t" style="left:1227px;top:430.6px;height:16.9px;line-height:16.9px;font-size:10.5px;color:#222;transform:scaleX(0.85);transform-origin:0 50%;">0:15</div>
<div class="r" style="left:1121px;top:447.5px;width:143px;height:16.9px;background:#e6b47c;border-bottom:1px solid #b8b8b8"></div>
<div class="r" style="left:1121px;top:447.5px;width:13px;height:16.9px;background:#f6f6f6;border-right:1px solid #a0a0a0;border-bottom:1px solid #a0a0a0"></div>
<div class="r" style="left:1134px;top:447.5px;width:14px;height:16.9px;background:#fdfdfd;border-right:1px solid #909090;border-bottom:1px solid #a0a0a0"></div>
<div class="r" style="left:1224px;top:447.5px;width:1px;height:16.9px;background:#c0c0c0"></div>
<div class="t" style="left:841.0px;top:449.0px;height:16.9px;line-height:16.9px;font-size:10.5px;font-weight:bold;color:#1a1a1a;width:600px;text-align:center;transform:scaleX(0.92);transform-origin:50% 50%;">6</div>
<svg style="left:1150px;top:450.0px" width="12" height="12" viewBox="0 0 12 12"><path d="M0.5 0.5 H11.5 L0.5 11.5Z" fill="#e8e820" stroke="#5a4a3a" stroke-width=".7"/><path d="M11.5 0.5 L0.5 11.5" stroke="#fff" stroke-width=".6"/></svg>
<div class="t" style="left:1163px;top:449.5px;height:16.9px;line-height:16.9px;font-size:10.5px;color:#3a1a0a;text-decoration:underline;transform:scaleX(0.82);transform-origin:0 50%;">Remontage</div>
<div class="t" style="left:1227px;top:447.5px;height:16.9px;line-height:16.9px;font-size:10.5px;color:#3a1a0a;text-decoration:underline;transform:scaleX(0.85);transform-origin:0 50%;">2:30</div>
<svg style="left:1125px;top:451.5px" width="6" height="9" viewBox="0 0 6 9"><path d="M0 0 L5.5 4.5 L0 9Z" fill="#111"/></svg>
<div class="r" style="left:1121px;top:624px;width:143px;height:17.5px;background:linear-gradient(#fdfdfd,#f0f0f0)"></div>
<div class="t" style="left:1132px;top:624px;height:17px;line-height:17px;font-size:11px;font-weight:bold;color:#1a1a1a;transform:scaleX(0.9);transform-origin:0 50%;">6</div>
<div class="t" style="left:1227px;top:624px;height:17px;line-height:17px;font-size:11px;font-weight:bold;color:#1a1a1a;transform:scaleX(0.9);transform-origin:0 50%;">8:30</div>
<div class="r" style="left:410px;top:109px;width:460px;height:468px;border-radius:7px;box-shadow:3px 5px 12px 3px rgba(0,0,0,.65)"></div>
<div class="r" style="left:410px;top:109px;width:460px;height:468px;border-radius:7px 7px 6px 6px;background:linear-gradient(90deg,#d4dee8,#c6d3de 40%,#cbd7e2 70%,#c4d1dd);border:1px solid #2e3a46"></div>
<div class="r" style="left:411px;top:110px;width:458px;height:3px;border-radius:6px 6px 0 0;background:rgba(255,255,255,.35)"></div>
<svg style="left:415px;top:113px" width="14" height="14" viewBox="0 0 14 14"><defs><radialGradient id="g2b" cx=".65" cy=".45" r=".6"><stop offset="0" stop-color="#6a88c0"/><stop offset="1" stop-color="#0e1e5a"/></radialGradient></defs><circle cx="7" cy="7" r="6" fill="url(#g2b)"/><path d="M1.6 5 Q3 1.2 7 1.2 Q8.5 1.4 9 3 Q8 6 6.5 7.5 Q4 7 1.6 5Z" fill="#e8f6fa"/><path d="M1.2 8 Q1.5 6 3 6.5 Q6 7.5 7.5 9.5 Q8 12 6.5 13 Q2.5 12.5 1.2 8Z" fill="#5a1808"/><path d="M0.6 6.5 Q1 5 2 5.5 Q2.5 8 4 11 Q1.5 10 0.6 6.5Z" fill="#f0a860"/><path d="M1.5 4.8 L4 5.3" stroke="#333" stroke-width=".9"/></svg>
<div class="t" style="left:433px;top:112px;height:16px;line-height:16px;font-size:11px;color:#111;transform:scaleX(0.9);transform-origin:0 50%;">Nouveau dossier d'intervention</div>
<div class="r" style="left:827.5px;top:109.5px;width:37px;height:15px;border-radius:0 0 4px 4px;background:linear-gradient(#e8a090,#c84030 45%,#b02010 55%,#d05a40);border:1px solid #4a2020;border-top:none"></div>
<svg style="left:841px;top:112.5px" width="10" height="9" viewBox="0 0 10 9"><path d="M1.5 1 L8.5 8 M8.5 1 L1.5 8" stroke="#fff" stroke-width="2.2"/></svg>
<div class="r" style="left:415.5px;top:132.5px;width:450px;height:440px;background:linear-gradient(#f4e9b8,#f1e4b0 50%,#f2e6b6);border:1px solid #5a5448"></div>
<div class="r" style="left:421px;top:137.5px;width:48.5px;height:20px;background:linear-gradient(#f6ecc8,#eedfae);border:1px solid #a89a70;border-bottom:none"></div>
<div class="t" style="left:145.0px;top:137.5px;height:20px;line-height:20px;font-size:10.5px;color:#222;width:600px;text-align:center;transform:scaleX(0.82);transform-origin:50% 50%;">Expertise</div>
<div class="r" style="left:527.5px;top:137.5px;width:53px;height:20px;background:linear-gradient(#f6ecc8,#eedfae);border:1px solid #a89a70;border-bottom:none"></div>
<div class="t" style="left:254.0px;top:137.5px;height:20px;line-height:20px;font-size:10.5px;color:#9a9278;width:600px;text-align:center;transform:scaleX(0.82);transform-origin:50% 50%;">Courtoisie</div>
<div class="r" style="left:419.5px;top:157px;width:441px;height:386px;background:linear-gradient(#f1e3ac,#efe0a8 50%,#f0e2ae);border:1px solid #8a8060"></div>
<div class="r" style="left:469.5px;top:136.5px;width:58px;height:22px;background:linear-gradient(#fcf8e8,#f4ead0 60%,#f1e3ac);border:1px solid #8a8060;border-bottom:none"></div>
<div class="t" style="left:198.5px;top:139px;height:20px;line-height:20px;font-size:10.5px;color:#222;width:600px;text-align:center;transform:scaleX(0.82);transform-origin:50% 50%;">Carrosserie</div>
<div class="r" style="left:425.5px;top:177.5px;width:20px;height:20.5px;background:linear-gradient(#efdcb6,#e8d0a6);border:1px solid #dcc090;border-bottom-color:#c8a470"></div>
<svg style="left:429.5px;top:181.5px" width="12" height="12" viewBox="0 0 12 12"><path d="M4.8 0.8 H7.2 V4.8 H11.2 V7.2 H7.2 V11.2 H4.8 V7.2 H0.8 V4.8 H4.8Z" fill="#48c848" stroke="#0a4a0a" stroke-width=".9"/></svg>
<div class="r" style="left:425.5px;top:198px;width:20px;height:20.5px;background:linear-gradient(#e8d0a8,#e4c89c);border:1px solid #dcc090"></div>
<svg style="left:430.5px;top:206.5px" width="11" height="4" viewBox="0 0 11 4"><rect x="0.5" y="0.5" width="10" height="3" rx="1.5" fill="#d83838" stroke="#8a1010" stroke-width=".6"/></svg>
<div class="r" style="left:449.5px;top:161.5px;width:407px;height:263.5px;background:#fff;border:1px solid #9a9a9a;border-right-color:#c8c8c8"></div>
<div class="r" style="left:450.5px;top:162.5px;width:392px;height:15px;background:linear-gradient(#fefefe,#f0f0f0)"></div>
<div class="r" style="left:450.5px;top:176.5px;width:392px;height:1.5px;background:#a8a8a8"></div>
<div class="r" style="left:476px;top:162.5px;width:1.2px;height:15px;background:#8a8a8a"></div>
<div class="r" style="left:552px;top:162.5px;width:1.2px;height:15px;background:#8a8a8a"></div>
<div class="r" style="left:592px;top:162.5px;width:1.2px;height:15px;background:#8a8a8a"></div>
<div class="r" style="left:688px;top:162.5px;width:1.2px;height:15px;background:#8a8a8a"></div>
<div class="r" style="left:748px;top:162.5px;width:1.2px;height:15px;background:#8a8a8a"></div>
<div class="t" style="left:453px;top:162.5px;height:15px;line-height:15px;font-size:11px;font-weight:bold;color:#1a1a1a;transform:scaleX(0.86);transform-origin:0 50%;">Ordr</div>
<div class="t" style="left:479.5px;top:162.5px;height:15px;line-height:15px;font-size:11px;font-weight:bold;color:#1a1a1a;transform:scaleX(0.86);transform-origin:0 50%;">Opération</div>
<div class="t" style="left:555px;top:162.5px;height:15px;line-height:15px;font-size:11px;font-weight:bold;color:#1a1a1a;transform:scaleX(0.86);transform-origin:0 50%;">Durée</div>
<div class="t" style="left:595px;top:162.5px;height:15px;line-height:15px;font-size:11px;font-weight:bold;color:#1a1a1a;transform:scaleX(0.86);transform-origin:0 50%;">Poste</div>
<div class="t" style="left:691px;top:162.5px;height:15px;line-height:15px;font-size:11px;font-weight:bold;color:#1a1a1a;transform:scaleX(0.86);transform-origin:0 50%;">Personnel</div>
<div class="r" style="left:842.5px;top:162.5px;width:13px;height:261px;background:linear-gradient(90deg,#f4f4f4,#e6e6e8)"></div>
<svg style="left:846px;top:168px" width="6" height="4" viewBox="0 0 6 4"><path d="M0 4 L3 0 L6 4Z" fill="#999"/></svg>
<svg style="left:846px;top:416px" width="6" height="4" viewBox="0 0 6 4"><path d="M0 0 H6 L3 4Z" fill="#999"/></svg>
<div class="r" style="left:450.5px;top:177.8px;width:392px;height:16.875px;border-bottom:1px solid #bdbdbd"></div>
<div class="r" style="left:450.5px;top:177.8px;width:12.5px;height:16.875px;background:#f6f6f6;border-bottom:1px solid #a8a8a8"></div>
<div class="r" style="left:462.5px;top:177.8px;width:1px;height:16.875px;background:#909090"></div>
<div class="r" style="left:476px;top:177.8px;width:1px;height:16.875px;background:#909090"></div>
<div class="r" style="left:552px;top:177.8px;width:1px;height:16.875px;background:#b0b0b0"></div>
<div class="r" style="left:592px;top:177.8px;width:1px;height:16.875px;background:#b0b0b0"></div>
<div class="r" style="left:688px;top:177.8px;width:1px;height:16.875px;background:#b0b0b0"></div>
<div class="r" style="left:748px;top:177.8px;width:1px;height:16.875px;background:#b0b0b0"></div>
<div class="t" style="left:169.5px;top:179.3px;height:16.875px;line-height:16.875px;font-size:10.5px;font-weight:bold;color:#1a1a1a;width:600px;text-align:center;transform:scaleX(0.92);transform-origin:50% 50%;">1</div>
<svg style="left:479px;top:180.3px" width="13" height="13" viewBox="0 0 13 13"><path d="M0.5 0.5 H12.5 L0.5 12.5Z" fill="#8a2a10" stroke="#3a3a2a" stroke-width=".8"/><path d="M12.5 0.5 L0.5 12.5" stroke="#fff" stroke-width=".6"/></svg>
<div class="t" style="left:491.5px;top:179.8px;height:16.875px;line-height:16.875px;font-size:10.5px;color:#222;text-decoration:underline;transform:scaleX(0.84);transform-origin:0 50%;">Démontage /</div>
<svg style="left:751px;top:180.3px" width="13" height="11" viewBox="0 0 13 11"><path d="M1.5 6 L3 2 Q4 1 6 1 L8 1 Q10 1 11 2.5 L12 6 Q13 7 12.5 9 L1 9 Q0.5 7 1.5 6Z" fill="#4f7c9c"/><path d="M3.3 5 L4.2 2.3 L9.8 2.3 L10.8 5Z" fill="#b8d4e8"/><rect x="2" y="6.2" width="2" height="1.2" fill="#e0f0ff"/><rect x="9.8" y="6.2" width="2" height="1.2" fill="#e0f0ff"/><rect x="1.5" y="8.5" width="2.5" height="2.5" rx="1" fill="#111"/><rect x="9.5" y="8.5" width="2.5" height="2.5" rx="1" fill="#111"/><path d="M8 0 L12 1 L11 3Z" fill="#6fa0c0"/></svg>
<div class="r" style="left:450.5px;top:194.68px;width:392px;height:16.875px;border-bottom:1px solid #bdbdbd"></div>
<div class="r" style="left:450.5px;top:194.68px;width:12.5px;height:16.875px;background:#f6f6f6;border-bottom:1px solid #a8a8a8"></div>
<div class="r" style="left:462.5px;top:194.68px;width:1px;height:16.875px;background:#909090"></div>
<div class="r" style="left:476px;top:194.68px;width:1px;height:16.875px;background:#909090"></div>
<div class="r" style="left:552px;top:194.68px;width:1px;height:16.875px;background:#b0b0b0"></div>
<div class="r" style="left:592px;top:194.68px;width:1px;height:16.875px;background:#b0b0b0"></div>
<div class="r" style="left:688px;top:194.68px;width:1px;height:16.875px;background:#b0b0b0"></div>
<div class="r" style="left:748px;top:194.68px;width:1px;height:16.875px;background:#b0b0b0"></div>
<div class="t" style="left:169.5px;top:196.18px;height:16.875px;line-height:16.875px;font-size:10.5px;font-weight:bold;color:#1a1a1a;width:600px;text-align:center;transform:scaleX(0.92);transform-origin:50% 50%;">2</div>
<svg style="left:479px;top:197.18px" width="13" height="13" viewBox="0 0 13 13"><path d="M0.5 0.5 H12.5 L0.5 12.5Z" fill="#e8a020" stroke="#3a3a2a" stroke-width=".8"/><path d="M12.5 0.5 L0.5 12.5" stroke="#fff" stroke-width=".6"/></svg>
<div class="t" style="left:491.5px;top:196.68px;height:16.875px;line-height:16.875px;font-size:10.5px;color:#222;transform:scaleX(0.84);transform-origin:0 50%;">Prépa /</div>
<div class="t" style="left:555px;top:195.18px;height:16.875px;line-height:16.875px;font-size:10.5px;color:#222;transform:scaleX(0.88);transform-origin:0 50%;">0:00</div>
<svg style="left:751px;top:197.18px" width="13" height="11" viewBox="0 0 13 11"><path d="M1.5 6 L3 2 Q4 1 6 1 L8 1 Q10 1 11 2.5 L12 6 Q13 7 12.5 9 L1 9 Q0.5 7 1.5 6Z" fill="#4f7c9c"/><path d="M3.3 5 L4.2 2.3 L9.8 2.3 L10.8 5Z" fill="#b8d4e8"/><rect x="2" y="6.2" width="2" height="1.2" fill="#e0f0ff"/><rect x="9.8" y="6.2" width="2" height="1.2" fill="#e0f0ff"/><rect x="1.5" y="8.5" width="2.5" height="2.5" rx="1" fill="#111"/><rect x="9.5" y="8.5" width="2.5" height="2.5" rx="1" fill="#111"/><path d="M8 0 L12 1 L11 3Z" fill="#6fa0c0"/></svg>
<div class="r" style="left:450.5px;top:211.55px;width:392px;height:16.875px;border-bottom:1px solid #bdbdbd"></div>
<div class="r" style="left:450.5px;top:211.55px;width:12.5px;height:16.875px;background:#f6f6f6;border-bottom:1px solid #a8a8a8"></div>
<div class="r" style="left:462.5px;top:211.55px;width:1px;height:16.875px;background:#909090"></div>
<div class="r" style="left:476px;top:211.55px;width:1px;height:16.875px;background:#909090"></div>
<div class="r" style="left:552px;top:211.55px;width:1px;height:16.875px;background:#b0b0b0"></div>
<div class="r" style="left:592px;top:211.55px;width:1px;height:16.875px;background:#b0b0b0"></div>
<div class="r" style="left:688px;top:211.55px;width:1px;height:16.875px;background:#b0b0b0"></div>
<div class="r" style="left:748px;top:211.55px;width:1px;height:16.875px;background:#b0b0b0"></div>
<div class="t" style="left:169.5px;top:213.05px;height:16.875px;line-height:16.875px;font-size:10.5px;font-weight:bold;color:#1a1a1a;width:600px;text-align:center;transform:scaleX(0.92);transform-origin:50% 50%;">3</div>
<svg style="left:479px;top:214.05px" width="13" height="13" viewBox="0 0 13 13"><path d="M0.5 0.5 H12.5 L0.5 12.5Z" fill="#f4f490" stroke="#3a3a2a" stroke-width=".8"/><path d="M12.5 0.5 L0.5 12.5" stroke="#fff" stroke-width=".6"/></svg>
<div class="t" style="left:491.5px;top:213.55px;height:16.875px;line-height:16.875px;font-size:10.5px;color:#222;transform:scaleX(0.84);transform-origin:0 50%;">Marbre</div>
<div class="t" style="left:555px;top:212.05px;height:16.875px;line-height:16.875px;font-size:10.5px;color:#222;transform:scaleX(0.88);transform-origin:0 50%;">0:00</div>
<svg style="left:751px;top:214.05px" width="13" height="11" viewBox="0 0 13 11"><path d="M1.5 6 L3 2 Q4 1 6 1 L8 1 Q10 1 11 2.5 L12 6 Q13 7 12.5 9 L1 9 Q0.5 7 1.5 6Z" fill="#4f7c9c"/><path d="M3.3 5 L4.2 2.3 L9.8 2.3 L10.8 5Z" fill="#b8d4e8"/><rect x="2" y="6.2" width="2" height="1.2" fill="#e0f0ff"/><rect x="9.8" y="6.2" width="2" height="1.2" fill="#e0f0ff"/><rect x="1.5" y="8.5" width="2.5" height="2.5" rx="1" fill="#111"/><rect x="9.5" y="8.5" width="2.5" height="2.5" rx="1" fill="#111"/><path d="M8 0 L12 1 L11 3Z" fill="#6fa0c0"/></svg>
<div class="r" style="left:450.5px;top:228.43px;width:392px;height:16.875px;border-bottom:1px solid #bdbdbd"></div>
<div class="r" style="left:450.5px;top:228.43px;width:12.5px;height:16.875px;background:#f6f6f6;border-bottom:1px solid #a8a8a8"></div>
<div class="r" style="left:462.5px;top:228.43px;width:1px;height:16.875px;background:#909090"></div>
<div class="r" style="left:476px;top:228.43px;width:1px;height:16.875px;background:#909090"></div>
<div class="r" style="left:552px;top:228.43px;width:1px;height:16.875px;background:#b0b0b0"></div>
<div class="r" style="left:592px;top:228.43px;width:1px;height:16.875px;background:#b0b0b0"></div>
<div class="r" style="left:688px;top:228.43px;width:1px;height:16.875px;background:#b0b0b0"></div>
<div class="r" style="left:748px;top:228.43px;width:1px;height:16.875px;background:#b0b0b0"></div>
<div class="t" style="left:169.5px;top:229.93px;height:16.875px;line-height:16.875px;font-size:10.5px;font-weight:bold;color:#1a1a1a;width:600px;text-align:center;transform:scaleX(0.92);transform-origin:50% 50%;">4</div>
<svg style="left:479px;top:230.93px" width="13" height="13" viewBox="0 0 13 13"><path d="M0.5 0.5 H12.5 L0.5 12.5Z" fill="#e02020" stroke="#3a3a2a" stroke-width=".8"/><path d="M12.5 0.5 L0.5 12.5" stroke="#fff" stroke-width=".6"/></svg>
<div class="t" style="left:491.5px;top:230.43px;height:16.875px;line-height:16.875px;font-size:10.5px;color:#222;transform:scaleX(0.84);transform-origin:0 50%;">Mécanique</div>
<div class="t" style="left:555px;top:228.93px;height:16.875px;line-height:16.875px;font-size:10.5px;color:#222;transform:scaleX(0.88);transform-origin:0 50%;">0:00</div>
<svg style="left:751px;top:230.93px" width="13" height="11" viewBox="0 0 13 11"><path d="M1.5 6 L3 2 Q4 1 6 1 L8 1 Q10 1 11 2.5 L12 6 Q13 7 12.5 9 L1 9 Q0.5 7 1.5 6Z" fill="#4f7c9c"/><path d="M3.3 5 L4.2 2.3 L9.8 2.3 L10.8 5Z" fill="#b8d4e8"/><rect x="2" y="6.2" width="2" height="1.2" fill="#e0f0ff"/><rect x="9.8" y="6.2" width="2" height="1.2" fill="#e0f0ff"/><rect x="1.5" y="8.5" width="2.5" height="2.5" rx="1" fill="#111"/><rect x="9.5" y="8.5" width="2.5" height="2.5" rx="1" fill="#111"/><path d="M8 0 L12 1 L11 3Z" fill="#6fa0c0"/></svg>
<div class="r" style="left:450.5px;top:245.3px;width:392px;height:16.875px;border-bottom:1px solid #bdbdbd"></div>
<div class="r" style="left:450.5px;top:245.3px;width:12.5px;height:16.875px;background:#f6f6f6;border-bottom:1px solid #a8a8a8"></div>
<div class="r" style="left:462.5px;top:245.3px;width:1px;height:16.875px;background:#909090"></div>
<div class="r" style="left:476px;top:245.3px;width:1px;height:16.875px;background:#909090"></div>
<div class="r" style="left:552px;top:245.3px;width:1px;height:16.875px;background:#b0b0b0"></div>
<div class="r" style="left:592px;top:245.3px;width:1px;height:16.875px;background:#b0b0b0"></div>
<div class="r" style="left:688px;top:245.3px;width:1px;height:16.875px;background:#b0b0b0"></div>
<div class="r" style="left:748px;top:245.3px;width:1px;height:16.875px;background:#b0b0b0"></div>
<div class="t" style="left:169.5px;top:246.8px;height:16.875px;line-height:16.875px;font-size:10.5px;font-weight:bold;color:#1a1a1a;width:600px;text-align:center;transform:scaleX(0.92);transform-origin:50% 50%;">5</div>
<svg style="left:479px;top:247.8px" width="13" height="13" viewBox="0 0 13 13"><path d="M0.5 0.5 H12.5 L0.5 12.5Z" fill="#0a5a1a" stroke="#3a3a2a" stroke-width=".8"/><path d="M12.5 0.5 L0.5 12.5" stroke="#fff" stroke-width=".6"/></svg>
<div class="t" style="left:491.5px;top:247.3px;height:16.875px;line-height:16.875px;font-size:10.5px;color:#222;transform:scaleX(0.84);transform-origin:0 50%;">Peinture</div>
<div class="t" style="left:555px;top:245.8px;height:16.875px;line-height:16.875px;font-size:10.5px;color:#222;transform:scaleX(0.88);transform-origin:0 50%;">0:00</div>
<svg style="left:751px;top:247.8px" width="13" height="11" viewBox="0 0 13 11"><path d="M1.5 6 L3 2 Q4 1 6 1 L8 1 Q10 1 11 2.5 L12 6 Q13 7 12.5 9 L1 9 Q0.5 7 1.5 6Z" fill="#4f7c9c"/><path d="M3.3 5 L4.2 2.3 L9.8 2.3 L10.8 5Z" fill="#b8d4e8"/><rect x="2" y="6.2" width="2" height="1.2" fill="#e0f0ff"/><rect x="9.8" y="6.2" width="2" height="1.2" fill="#e0f0ff"/><rect x="1.5" y="8.5" width="2.5" height="2.5" rx="1" fill="#111"/><rect x="9.5" y="8.5" width="2.5" height="2.5" rx="1" fill="#111"/><path d="M8 0 L12 1 L11 3Z" fill="#6fa0c0"/></svg>
<svg style="left:764.5px;top:247.8px" width="12" height="11" viewBox="0 0 12 11"><path d="M0 2.5 L4 2.5 L4 0 L11.5 5.5 L5.5 11 L5.5 8 Q3 8 2.5 6 L0 6Z" fill="#1d4f7e"/></svg>
<div class="r" style="left:450.5px;top:262.18px;width:392px;height:16.875px;border-bottom:1px solid #bdbdbd"></div>
<div class="r" style="left:450.5px;top:262.18px;width:12.5px;height:16.875px;background:#f6f6f6;border-bottom:1px solid #a8a8a8"></div>
<div class="r" style="left:462.5px;top:262.18px;width:1px;height:16.875px;background:#909090"></div>
<div class="r" style="left:476px;top:262.18px;width:1px;height:16.875px;background:#909090"></div>
<div class="r" style="left:552px;top:262.18px;width:1px;height:16.875px;background:#b0b0b0"></div>
<div class="r" style="left:592px;top:262.18px;width:1px;height:16.875px;background:#b0b0b0"></div>
<div class="r" style="left:688px;top:262.18px;width:1px;height:16.875px;background:#b0b0b0"></div>
<div class="r" style="left:748px;top:262.18px;width:1px;height:16.875px;background:#b0b0b0"></div>
<div class="t" style="left:169.5px;top:263.68px;height:16.875px;line-height:16.875px;font-size:10.5px;font-weight:bold;color:#1a1a1a;width:600px;text-align:center;transform:scaleX(0.92);transform-origin:50% 50%;">6</div>
<svg style="left:479px;top:264.68px" width="13" height="13" viewBox="0 0 13 13"><path d="M0.5 0.5 H12.5 L0.5 12.5Z" fill="#20b020" stroke="#3a3a2a" stroke-width=".8"/><path d="M12.5 0.5 L0.5 12.5" stroke="#fff" stroke-width=".6"/></svg>
<div class="t" style="left:491.5px;top:264.18px;height:16.875px;line-height:16.875px;font-size:10.5px;color:#222;transform:scaleX(0.84);transform-origin:0 50%;">Etuvage</div>
<div class="t" style="left:555px;top:262.68px;height:16.875px;line-height:16.875px;font-size:10.5px;color:#222;transform:scaleX(0.88);transform-origin:0 50%;">0:30</div>
<svg style="left:751px;top:264.68px" width="13" height="11" viewBox="0 0 13 11"><path d="M1.5 6 L3 2 Q4 1 6 1 L8 1 Q10 1 11 2.5 L12 6 Q13 7 12.5 9 L1 9 Q0.5 7 1.5 6Z" fill="#4f7c9c"/><path d="M3.3 5 L4.2 2.3 L9.8 2.3 L10.8 5Z" fill="#b8d4e8"/><rect x="2" y="6.2" width="2" height="1.2" fill="#e0f0ff"/><rect x="9.8" y="6.2" width="2" height="1.2" fill="#e0f0ff"/><rect x="1.5" y="8.5" width="2.5" height="2.5" rx="1" fill="#111"/><rect x="9.5" y="8.5" width="2.5" height="2.5" rx="1" fill="#111"/><path d="M8 0 L12 1 L11 3Z" fill="#6fa0c0"/></svg>
<svg style="left:764.5px;top:264.68px" width="12" height="11" viewBox="0 0 12 11"><path d="M0 2.5 L4 2.5 L4 0 L11.5 5.5 L5.5 11 L5.5 8 Q3 8 2.5 6 L0 6Z" fill="#1d4f7e"/></svg>
<div class="r" style="left:450.5px;top:279.05px;width:392px;height:16.875px;border-bottom:1px solid #bdbdbd"></div>
<div class="r" style="left:450.5px;top:279.05px;width:12.5px;height:16.875px;background:#f6f6f6;border-bottom:1px solid #a8a8a8"></div>
<div class="r" style="left:462.5px;top:279.05px;width:1px;height:16.875px;background:#909090"></div>
<div class="r" style="left:476px;top:279.05px;width:1px;height:16.875px;background:#909090"></div>
<div class="r" style="left:552px;top:279.05px;width:1px;height:16.875px;background:#b0b0b0"></div>
<div class="r" style="left:592px;top:279.05px;width:1px;height:16.875px;background:#b0b0b0"></div>
<div class="r" style="left:688px;top:279.05px;width:1px;height:16.875px;background:#b0b0b0"></div>
<div class="r" style="left:748px;top:279.05px;width:1px;height:16.875px;background:#b0b0b0"></div>
<div class="t" style="left:169.5px;top:280.55px;height:16.875px;line-height:16.875px;font-size:10.5px;font-weight:bold;color:#1a1a1a;width:600px;text-align:center;transform:scaleX(0.92);transform-origin:50% 50%;">7</div>
<svg style="left:479px;top:281.55px" width="13" height="13" viewBox="0 0 13 13"><path d="M0.5 0.5 H12.5 L0.5 12.5Z" fill="#e06a3a" stroke="#3a3a2a" stroke-width=".8"/><path d="M12.5 0.5 L0.5 12.5" stroke="#fff" stroke-width=".6"/></svg>
<div class="t" style="left:491.5px;top:281.05px;height:16.875px;line-height:16.875px;font-size:10.5px;color:#222;transform:scaleX(0.84);transform-origin:0 50%;">Démarouflage</div>
<div class="t" style="left:555px;top:279.55px;height:16.875px;line-height:16.875px;font-size:10.5px;color:#222;transform:scaleX(0.88);transform-origin:0 50%;">0:15</div>
<svg style="left:751px;top:281.55px" width="13" height="11" viewBox="0 0 13 11"><path d="M1.5 6 L3 2 Q4 1 6 1 L8 1 Q10 1 11 2.5 L12 6 Q13 7 12.5 9 L1 9 Q0.5 7 1.5 6Z" fill="#4f7c9c"/><path d="M3.3 5 L4.2 2.3 L9.8 2.3 L10.8 5Z" fill="#b8d4e8"/><rect x="2" y="6.2" width="2" height="1.2" fill="#e0f0ff"/><rect x="9.8" y="6.2" width="2" height="1.2" fill="#e0f0ff"/><rect x="1.5" y="8.5" width="2.5" height="2.5" rx="1" fill="#111"/><rect x="9.5" y="8.5" width="2.5" height="2.5" rx="1" fill="#111"/><path d="M8 0 L12 1 L11 3Z" fill="#6fa0c0"/></svg>
<div class="r" style="left:450.5px;top:295.93px;width:392px;height:16.875px;border-bottom:1px solid #bdbdbd"></div>
<div class="r" style="left:450.5px;top:295.93px;width:12.5px;height:16.875px;background:#f6f6f6;border-bottom:1px solid #a8a8a8"></div>
<div class="r" style="left:462.5px;top:295.93px;width:1px;height:16.875px;background:#909090"></div>
<div class="r" style="left:476px;top:295.93px;width:1px;height:16.875px;background:#909090"></div>
<div class="r" style="left:552px;top:295.93px;width:1px;height:16.875px;background:#b0b0b0"></div>
<div class="r" style="left:592px;top:295.93px;width:1px;height:16.875px;background:#b0b0b0"></div>
<div class="r" style="left:688px;top:295.93px;width:1px;height:16.875px;background:#b0b0b0"></div>
<div class="r" style="left:748px;top:295.93px;width:1px;height:16.875px;background:#b0b0b0"></div>
<div class="t" style="left:169.5px;top:297.43px;height:16.875px;line-height:16.875px;font-size:10.5px;font-weight:bold;color:#1a1a1a;width:600px;text-align:center;transform:scaleX(0.92);transform-origin:50% 50%;">8</div>
<svg style="left:479px;top:298.43px" width="13" height="13" viewBox="0 0 13 13"><path d="M0.5 0.5 H12.5 L0.5 12.5Z" fill="#d8e020" stroke="#3a3a2a" stroke-width=".8"/><path d="M12.5 0.5 L0.5 12.5" stroke="#fff" stroke-width=".6"/></svg>
<div class="t" style="left:491.5px;top:297.93px;height:16.875px;line-height:16.875px;font-size:10.5px;color:#222;transform:scaleX(0.84);transform-origin:0 50%;">Remontage</div>
<div class="t" style="left:555px;top:296.43px;height:16.875px;line-height:16.875px;font-size:10.5px;color:#222;transform:scaleX(0.88);transform-origin:0 50%;">0:00</div>
<svg style="left:751px;top:298.43px" width="13" height="11" viewBox="0 0 13 11"><path d="M1.5 6 L3 2 Q4 1 6 1 L8 1 Q10 1 11 2.5 L12 6 Q13 7 12.5 9 L1 9 Q0.5 7 1.5 6Z" fill="#4f7c9c"/><path d="M3.3 5 L4.2 2.3 L9.8 2.3 L10.8 5Z" fill="#b8d4e8"/><rect x="2" y="6.2" width="2" height="1.2" fill="#e0f0ff"/><rect x="9.8" y="6.2" width="2" height="1.2" fill="#e0f0ff"/><rect x="1.5" y="8.5" width="2.5" height="2.5" rx="1" fill="#111"/><rect x="9.5" y="8.5" width="2.5" height="2.5" rx="1" fill="#111"/><path d="M8 0 L12 1 L11 3Z" fill="#6fa0c0"/></svg>
<svg style="left:454px;top:182.5px" width="6" height="9" viewBox="0 0 6 9"><path d="M0 0 L5.5 4.5 L0 9Z" fill="#111"/></svg>
<div class="r" style="left:553px;top:178.5px;width:39px;height:16px;background:#fff"></div>
<div class="r" style="left:554px;top:179.5px;width:18px;height:10.5px;background:#3468c8"></div>
<div class="t" style="left:554px;top:179px;height:11px;line-height:11px;font-size:10.5px;color:#fff;transform:scaleX(0.8);transform-origin:0 50%;">0:00</div>
<div class="r" style="left:578.5px;top:179px;width:11px;height:13px;background:linear-gradient(#fafafa,#e0e0e0);border:1px solid #a8a8a8;border-radius:1px"></div>
<svg style="left:581px;top:181px" width="6" height="9" viewBox="0 0 6 9"><path d="M0.5 3.5 L3 1 L5.5 3.5Z M0.5 5.5 L3 8 L5.5 5.5Z" fill="#444"/></svg>
<div class="r" style="left:576px;top:180px;width:1px;height:12px;background:#b8b8b8"></div>
<div class="r" style="left:450.5px;top:404px;width:392px;height:20px;background:linear-gradient(#fdfdfd,#eff1f4)"></div>
<div class="t" style="left:460px;top:404px;height:20px;line-height:20px;font-size:11px;font-weight:bold;color:#111;transform:scaleX(0.9);transform-origin:0 50%;">8</div>
<div class="t" style="left:554px;top:404px;height:20px;line-height:20px;font-size:10.5px;color:#222;text-decoration:underline;transform:scaleX(0.85);transform-origin:0 50%;">0:45</div>
<div class="r" style="left:425.5px;top:429.5px;width:433px;height:88px;border:1px solid #c0b088;border-radius:2px;box-shadow:inset 1px 1px 0 #fff8e0"></div>
<div class="r" style="left:431px;top:424px;width:76px;height:11px;background:#f0e1aa"></div>
<div class="t" style="left:433px;top:423.5px;height:12px;line-height:12px;font-size:10.5px;color:#3a3020;transform:scaleX(0.83);transform-origin:0 50%;">Détails de l'opération</div>
<div class="r" style="left:432.5px;top:439px;width:9.5px;height:9.5px;background:linear-gradient(135deg,#d8d8d8,#fff);border:1px solid #5a5a5a;border-right-color:#e8e8e8;border-bottom-color:#e8e8e8"></div>
<svg style="left:433.5px;top:440px" width="8" height="8" viewBox="0 0 8 8"><path d="M1 4 L3 6.5 L7 1" fill="none" stroke="#111" stroke-width="1.6"/></svg>
<div class="t" style="left:446px;top:435.5px;height:16px;line-height:16px;font-size:10.5px;color:#2a2418;transform:scaleX(0.86);transform-origin:0 50%;">Vehicule</div>
<div class="r" style="left:432.5px;top:458.5px;width:9.5px;height:9.5px;background:linear-gradient(135deg,#d8d8d8,#fff);border:1px solid #5a5a5a;border-right-color:#e8e8e8;border-bottom-color:#e8e8e8"></div>
<div class="t" style="left:446px;top:455.0px;height:16px;line-height:16px;font-size:10.5px;color:#2a2418;transform:scaleX(0.86);transform-origin:0 50%;">Etape suivante</div>
<div class="r" style="left:432.5px;top:477.5px;width:9.5px;height:9.5px;background:linear-gradient(135deg,#d8d8d8,#fff);border:1px solid #5a5a5a;border-right-color:#e8e8e8;border-bottom-color:#e8e8e8"></div>
<div class="t" style="left:446px;top:474.0px;height:16px;line-height:16px;font-size:10.5px;color:#2a2418;transform:scaleX(0.86);transform-origin:0 50%;">Non roulant</div>
<div class="r" style="left:432.5px;top:496.5px;width:9.5px;height:9.5px;background:linear-gradient(135deg,#d8d8d8,#fff);border:1px solid #5a5a5a;border-right-color:#e8e8e8;border-bottom-color:#e8e8e8"></div>
<div class="t" style="left:446px;top:493.0px;height:16px;line-height:16px;font-size:10.5px;color:#2a2418;transform:scaleX(0.86);transform-origin:0 50%;">Sous-traitance</div>
<div class="t" style="left:515px;top:437.5px;height:16px;line-height:16px;font-size:10.5px;color:#2a2418;transform:scaleX(0.83);transform-origin:0 50%;">Occupation poste :</div>
<div class="t" style="left:515px;top:456.5px;height:16px;line-height:16px;font-size:10.5px;color:#2a2418;transform:scaleX(0.83);transform-origin:0 50%;">Temps d'attente :</div>
<div class="t" style="left:515px;top:475.5px;height:16px;line-height:16px;font-size:10.5px;color:#2a2418;transform:scaleX(0.83);transform-origin:0 50%;">Commentaire :</div>
<div class="r" style="left:592px;top:437px;width:96px;height:17px;background:linear-gradient(#fbf8ea,#f6f0da);border:1px solid #d8d0b8;border-top:2px solid #6a6250;border-left:2px solid #6a6250"></div>
<div class="t" style="left:594px;top:437px;height:17px;line-height:17px;font-size:10.5px;color:#111;transform:scaleX(0.85);transform-origin:0 50%;">100</div>
<div class="r" style="left:676px;top:439px;width:11px;height:7px;background:#f6f2e4;border-bottom:1px solid #6a6250"></div>
<div class="r" style="left:676px;top:446px;width:11px;height:7px;background:#f6f2e4;border-bottom:1px solid #6a6250"></div>
<svg style="left:679px;top:440px" width="6" height="12" viewBox="0 0 6 12"><path d="M1.5 3.5 L3 2 L4.5 3.5Z M1.5 8.5 L3 10 L4.5 8.5Z" fill="#333"/></svg>
<div class="r" style="left:592px;top:456px;width:96px;height:16px;background:linear-gradient(#fbf8ea,#f6f0da);border:1px solid #d8d0b8;border-top:2px solid #6a6250;border-left:2px solid #6a6250"></div>
<div class="t" style="left:594px;top:456px;height:16px;line-height:16px;font-size:10.5px;color:#111;transform:scaleX(0.85);transform-origin:0 50%;">0:00</div>
<div class="r" style="left:675.5px;top:458px;width:11px;height:12px;background:linear-gradient(#fafafa,#e4e4e4);border:1px solid #b0b8c8"></div>
<svg style="left:678px;top:459.5px" width="6" height="9" viewBox="0 0 6 9"><path d="M0.5 3.5 L3 1 L5.5 3.5Z M0.5 5.5 L3 8 L5.5 5.5Z" fill="#2a3a5a"/></svg>
<div class="r" style="left:592px;top:475.5px;width:96px;height:35px;background:linear-gradient(#fbf8ea,#f6f0da);border:1px solid #d8d0b8;border-top:2px solid #6a6250;border-left:2px solid #6a6250"></div>
<div class="r" style="left:674.5px;top:477.5px;width:13px;height:32px;background:linear-gradient(90deg,#f4f4f4,#e4e4e6)"></div>
<svg style="left:678px;top:483px" width="6" height="4" viewBox="0 0 6 4"><path d="M0 4 L3 0 L6 4Z" fill="#888"/></svg>
<svg style="left:678px;top:501px" width="6" height="4" viewBox="0 0 6 4"><path d="M0 0 H6 L3 4Z" fill="#888"/></svg>
<div class="t" style="left:694px;top:437px;height:16px;line-height:16px;font-size:10.5px;color:#2a2418;transform:scaleX(0.83);transform-origin:0 50%;">Date début :</div>
<div class="t" style="left:694px;top:456px;height:16px;line-height:16px;font-size:10.5px;color:#2a2418;transform:scaleX(0.83);transform-origin:0 50%;">Heure début :</div>
<div class="t" style="left:694px;top:475.5px;height:16px;line-height:16px;font-size:10.5px;color:#2a2418;transform:scaleX(0.83);transform-origin:0 50%;">Date fin :</div>
<div class="t" style="left:694px;top:495px;height:16px;line-height:16px;font-size:10.5px;color:#2a2418;transform:scaleX(0.83);transform-origin:0 50%;">Heure fin :</div>
<div class="r" style="left:752px;top:437.5px;width:102px;height:15px;background:linear-gradient(#fbf8ea,#f6f0da);border:1px solid #d8d0b8;border-top:2px solid #5a5240;border-left:2px solid #5a5240"></div>
<div class="r" style="left:754px;top:439.5px;width:11px;height:11px;border:1px dotted #444;background:#fff"></div>
<div class="r" style="left:755px;top:440.5px;width:8px;height:8px;border-left:1.5px solid #333;border-top:1.5px solid #333;background:#f4f4f4"></div>
<div class="t" style="left:766px;top:437.5px;height:15px;line-height:15px;font-size:10.5px;color:#8a8a8a;transform:scaleX(0.82);transform-origin:0 50%;">27/09/2013</div>
<div class="r" style="left:840px;top:439.5px;width:13px;height:12px;background:linear-gradient(#fafafa,#e8e8e8);border-left:1px solid #ccc;border-bottom:2px solid #444;border-right:1px solid #444"></div>
<svg style="left:843px;top:443.5px" width="7" height="4" viewBox="0 0 7 4"><path d="M0 0 H7 L3.5 4Z" fill="#000"/></svg>
<div class="r" style="left:752px;top:476px;width:102px;height:15px;background:linear-gradient(#fbf8ea,#f6f0da);border:1px solid #d8d0b8;border-top:2px solid #5a5240;border-left:2px solid #5a5240"></div>
<div class="r" style="left:754px;top:478px;width:11px;height:11px;border:1px dotted #444;background:#fff"></div>
<div class="r" style="left:755px;top:479px;width:8px;height:8px;border-left:1.5px solid #333;border-top:1.5px solid #333;background:#f4f4f4"></div>
<div class="t" style="left:766px;top:476px;height:15px;line-height:15px;font-size:10.5px;color:#8a8a8a;transform:scaleX(0.82);transform-origin:0 50%;">27/09/2013</div>
<div class="r" style="left:840px;top:478px;width:13px;height:12px;background:linear-gradient(#fafafa,#e8e8e8);border-left:1px solid #ccc;border-bottom:2px solid #444;border-right:1px solid #444"></div>
<svg style="left:843px;top:482px" width="7" height="4" viewBox="0 0 7 4"><path d="M0 0 H7 L3.5 4Z" fill="#000"/></svg>
<div class="r" style="left:765px;top:456px;width:89px;height:16px;background:linear-gradient(#fbf8ea,#f6f0da);border:1px solid #e0d8c0;border-top:2px solid #7a7260;border-left:2px solid #7a7260"></div>
<div class="t" style="left:767px;top:456px;height:16px;line-height:16px;font-size:10.5px;color:#9a9a9a;transform:scaleX(0.85);transform-origin:0 50%;">0:00</div>
<div class="r" style="left:840.5px;top:458px;width:11px;height:12px;background:#f4f0e4;border:1px solid #c8c8c8"></div>
<svg style="left:843px;top:459.5px" width="6" height="9" viewBox="0 0 6 9"><path d="M0.5 3.5 L3 1 L5.5 3.5Z M0.5 5.5 L3 8 L5.5 5.5Z" fill="#bbb"/></svg>
<div class="r" style="left:765px;top:494.5px;width:89px;height:16px;background:linear-gradient(#fbf8ea,#f6f0da);border:1px solid #e0d8c0;border-top:2px solid #7a7260;border-left:2px solid #7a7260"></div>
<div class="t" style="left:767px;top:494.5px;height:16px;line-height:16px;font-size:10.5px;color:#9a9a9a;transform:scaleX(0.85);transform-origin:0 50%;">0:00</div>
<div class="r" style="left:840.5px;top:496.5px;width:11px;height:12px;background:#f4f0e4;border:1px solid #c8c8c8"></div>
<svg style="left:843px;top:498.0px" width="6" height="9" viewBox="0 0 6 9"><path d="M0.5 3.5 L3 1 L5.5 3.5Z M0.5 5.5 L3 8 L5.5 5.5Z" fill="#bbb"/></svg>
<div class="r" style="left:505.5px;top:524.5px;width:306.5px;height:13.5px;background:#fff;border:1px solid #d0d0d0;border-top:2px solid #5a5448;border-left:2px solid #5a5448"></div>
<div class="t" style="left:508px;top:524.5px;height:13.5px;line-height:13.5px;font-size:10.5px;color:#111;transform:scaleX(0.83);transform-origin:0 50%;">Ne pas attirer l'attention sur ce dossier d'intervention</div>
<div class="r" style="left:798px;top:526.5px;width:13px;height:11px;background:linear-gradient(#fafafa,#e4e4e4);border-right:1px solid #444;border-bottom:1px solid #444;border-left:1px solid #ddd"></div>
<svg style="left:801.5px;top:530px" width="6" height="3.5" viewBox="0 0 6 3.5"><path d="M0 0 H6 L3 3.5Z" fill="#000"/></svg>
<div class="r" style="left:717.5px;top:549.5px;width:69px;height:19.5px;background:linear-gradient(#f6e8c0,#efdcac);border:1px solid #cdb07a;border-radius:1px"></div>
<svg style="left:739px;top:555px" width="12" height="9" viewBox="0 0 12 9"><path d="M0.5 4.5 L4 8 L11.5 1" fill="none" stroke="#2a9a2a" stroke-width="2.2"/></svg>
<div class="t" style="left:754px;top:549.5px;height:19.5px;line-height:19.5px;font-size:10.5px;color:#1a1a1a;transform:scaleX(0.85);transform-origin:0 50%;">Ok</div>
<div class="r" style="left:790px;top:549.5px;width:70.5px;height:19.5px;background:linear-gradient(#f6e8c0,#efdcac);border:1px solid #cdb07a;border-radius:1px"></div>
<svg style="left:803px;top:553px" width="13" height="12" viewBox="0 0 13 12"><path d="M1 1 L12 11 M12 1 L1 11" stroke="#c82818" stroke-width="1.6"/></svg>
<div class="t" style="left:819px;top:549.5px;height:19.5px;line-height:19.5px;font-size:10.5px;color:#1a1a1a;transform:scaleX(0.85);transform-origin:0 50%;">Annuler</div>
</body></html>
